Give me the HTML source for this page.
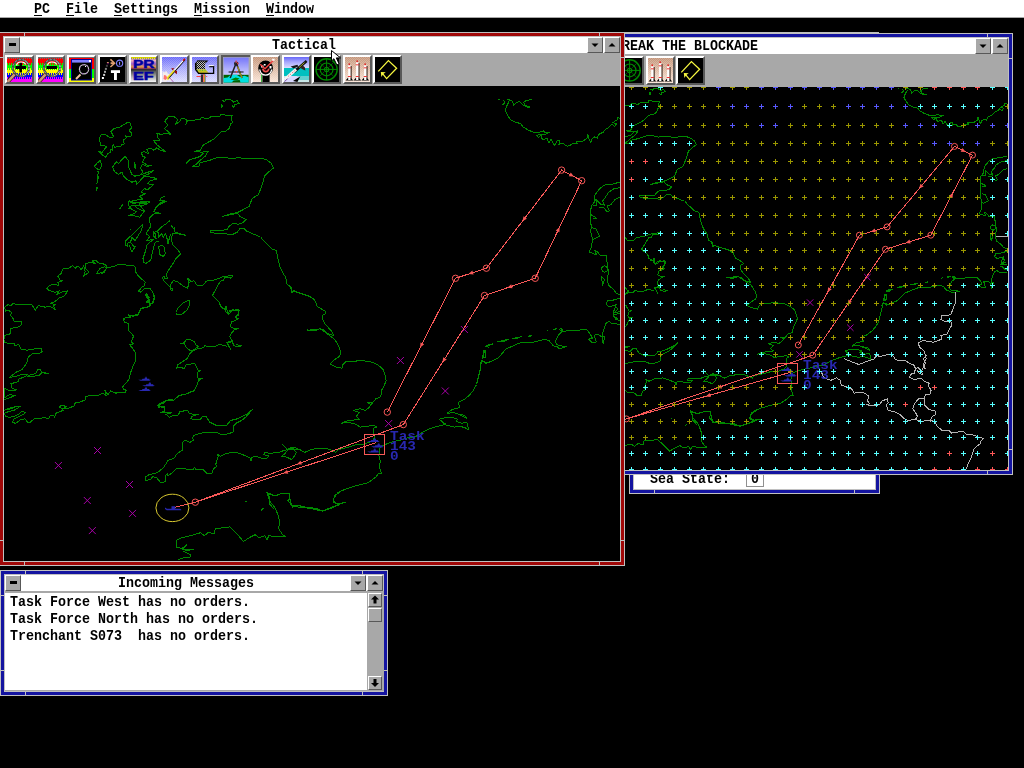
<!DOCTYPE html>
<html><head><meta charset="utf-8"><title>Tactical</title>
<style>
html,body{margin:0;padding:0;background:#000;}
body{width:1024px;height:768px;position:relative;overflow:hidden;font-family:"Liberation Mono",monospace;}
body>div,body>span,body>svg{position:absolute;display:block;}
.t{font:bold 13.333px/16px "Liberation Mono",monospace;white-space:pre;height:16px;transform-origin:0 12px;transform:scaleY(1.14);letter-spacing:0;will-change:transform;}
.btn{background:#a8a8a8;box-sizing:border-box;border-top:1px solid #fff;border-left:1px solid #fff;border-bottom:1px solid #585858;border-right:1px solid #585858;overflow:visible;}
.btn i{position:absolute;display:block;}
.btn svg{position:absolute;left:-1px;top:-1px;}
.ic{position:absolute;width:29px;height:29px;box-sizing:border-box;}
.icb{position:absolute;}
</style></head>
<body>
<svg width="0" height="0" style="position:absolute"><defs>
<pattern id="ckr" width="2" height="2" patternUnits="userSpaceOnUse"><rect width="1" height="1" fill="#f00"/><rect x="1" y="1" width="1" height="1" fill="#f00"/></pattern><pattern id="ckg" width="2" height="2" patternUnits="userSpaceOnUse"><rect width="1" height="1" fill="#0f0"/><rect x="1" y="1" width="1" height="1" fill="#0f0"/></pattern><pattern id="cky" width="2" height="2" patternUnits="userSpaceOnUse"><rect width="1" height="1" fill="#ff0"/><rect x="1" y="1" width="1" height="1" fill="#ff0"/></pattern><pattern id="ckb" width="2" height="2" patternUnits="userSpaceOnUse"><rect width="1" height="1" fill="#00f"/><rect x="1" y="1" width="1" height="1" fill="#00f"/></pattern><pattern id="ckm" width="2" height="2" patternUnits="userSpaceOnUse"><rect width="1" height="1" fill="#f0f"/><rect x="1" y="1" width="1" height="1" fill="#f0f"/></pattern><pattern id="ckw" width="2" height="2" patternUnits="userSpaceOnUse"><rect width="1" height="1" fill="#fff"/><rect x="1" y="1" width="1" height="1" fill="#fff"/></pattern><pattern id="ckk" width="2" height="2" patternUnits="userSpaceOnUse"><rect width="1" height="1" fill="#000"/><rect x="1" y="1" width="1" height="1" fill="#000"/></pattern>
<linearGradient id="sky" x1="0" y1="0" x2="0" y2="1"><stop offset="0" stop-color="#6868f8"/><stop offset="0.45" stop-color="#a8a8fc"/><stop offset="1" stop-color="#dcdcff"/></linearGradient>
<linearGradient id="tan" x1="0" y1="0" x2="0" y2="1"><stop offset="0" stop-color="#c49478"/><stop offset="1" stop-color="#fae4d6"/></linearGradient>
<linearGradient id="gry" x1="0" y1="0" x2="0" y2="1"><stop offset="0" stop-color="#505050"/><stop offset="0.5" stop-color="#a8a8a8"/><stop offset="1" stop-color="#f4f4f4"/></linearGradient>
<linearGradient id="sun" x1="0" y1="0" x2="0" y2="1"><stop offset="0" stop-color="#2020a0"/><stop offset="0.25" stop-color="#f8b8b8"/><stop offset="0.55" stop-color="#a060c8"/><stop offset="0.8" stop-color="#e0a040"/><stop offset="1" stop-color="#600060"/></linearGradient>
</defs></svg>
<div style="left:0px;top:0px;width:1024px;height:17px;background:#fff;"></div>
<div style="left:0px;top:17px;width:1024px;height:1px;background:#a8a8a8;"></div>
<span class="t" style="left:34px;top:2px;color:#000;">PC</span>
<div style="left:34px;top:15px;width:8px;height:1px;background:#000;"></div>
<span class="t" style="left:66px;top:2px;color:#000;">File</span>
<div style="left:66px;top:15px;width:8px;height:1px;background:#000;"></div>
<span class="t" style="left:114px;top:2px;color:#000;">Settings</span>
<div style="left:114px;top:15px;width:8px;height:1px;background:#000;"></div>
<span class="t" style="left:194px;top:2px;color:#000;">Mission</span>
<div style="left:194px;top:15px;width:8px;height:1px;background:#000;"></div>
<span class="t" style="left:266px;top:2px;color:#000;">Window</span>
<div style="left:266px;top:15px;width:8px;height:1px;background:#000;"></div>
<div style="left:629px;top:300px;width:251px;height:194px;background:#c0c0c0;"></div>
<div style="left:630px;top:301px;width:249px;height:192px;background:#1414a0;"></div>
<div style="left:633px;top:304px;width:243px;height:186px;background:#c0c0c0;"></div>
<div style="left:654px;top:301px;width:1px;height:3px;background:#c0c0c0;"></div>
<div style="left:654px;top:490px;width:1px;height:3px;background:#c0c0c0;"></div>
<div style="left:854px;top:301px;width:1px;height:3px;background:#c0c0c0;"></div>
<div style="left:854px;top:490px;width:1px;height:3px;background:#c0c0c0;"></div>
<div style="left:630px;top:325px;width:3px;height:1px;background:#c0c0c0;"></div>
<div style="left:876px;top:325px;width:3px;height:1px;background:#c0c0c0;"></div>
<div style="left:630px;top:468px;width:3px;height:1px;background:#c0c0c0;"></div>
<div style="left:876px;top:468px;width:3px;height:1px;background:#c0c0c0;"></div>
<div style="left:625px;top:32px;width:254px;height:1px;background:#c0c0c0;"></div>
<div style="left:634px;top:304px;width:241px;height:185px;background:#fff;"></div>
<span class="t" style="left:650px;top:472px;color:#000;">Sea&nbsp;State:</span>
<div style="left:746px;top:471px;width:18px;height:16px;background:#fff;border:1px solid #909090;box-sizing:border-box"></div>
<span class="t" style="left:751px;top:472px;color:#000;">0</span>
<div style="left:450px;top:33px;width:563px;height:442px;background:#c0c0c0;"></div>
<div style="left:451px;top:34px;width:561px;height:440px;background:#1414a0;"></div>
<div style="left:454px;top:37px;width:555px;height:434px;background:#c0c0c0;"></div>
<div style="left:475px;top:34px;width:1px;height:3px;background:#c0c0c0;"></div>
<div style="left:475px;top:471px;width:1px;height:3px;background:#c0c0c0;"></div>
<div style="left:987px;top:34px;width:1px;height:3px;background:#c0c0c0;"></div>
<div style="left:987px;top:471px;width:1px;height:3px;background:#c0c0c0;"></div>
<div style="left:451px;top:58px;width:3px;height:1px;background:#c0c0c0;"></div>
<div style="left:1009px;top:58px;width:3px;height:1px;background:#c0c0c0;"></div>
<div style="left:451px;top:449px;width:3px;height:1px;background:#c0c0c0;"></div>
<div style="left:1009px;top:449px;width:3px;height:1px;background:#c0c0c0;"></div>
<div style="left:455px;top:38px;width:553px;height:16px;background:#fff;"></div>
<div style="left:455px;top:54px;width:553px;height:33px;background:#a8a8a8;"></div>
<div style="left:455px;top:87px;width:553px;height:383px;background:#000;"></div>
<span class="t" style="left:614px;top:39px;color:#000;">BREAK&nbsp;THE&nbsp;BLOCKADE</span>
<div class="btn" style="left:975px;top:38px;width:16px;height:16px"><svg width="16" height="16"><path d="M4.5 6.5h7l-3.5 3.5z" fill="#000"/></svg></div>
<div class="btn" style="left:992px;top:38px;width:16px;height:16px"><svg width="16" height="16"><path d="M4.5 9.5h7l-3.5 -3.5z" fill="#000"/></svg></div>
<div style="left:0;top:0"><svg class="icb" style="left:615px;top:56px" width="29" height="29" viewBox="0 0 29 29"><rect x="2" y="2" width="25" height="25" fill="#000"/><g fill="none" stroke="#008800"><circle cx="14.6" cy="14.4" r="10.6" stroke-width="1.4"/><circle cx="14.6" cy="14.4" r="6.4" stroke-width="1.2"/><circle cx="14.6" cy="14.4" r="2.2" stroke-width="1.1"/><path d="M4 14.4h21.2M14.6 3.8v21.2" stroke-width="1"/><path d="M7.4 7.2l4.6 4.6M17.2 17l4.6 4.6M21.8 7.2l-4.6 4.6M12 17l-4.6 4.6" stroke-width="0.6"/></g><path d="M0 0h29l-2 2h-25v25l-2 2z" fill="#fff"/><path d="M29 0v29h-29l2-2h25v-25z" fill="#585858"/></svg><svg class="icb" style="left:646px;top:56px" width="29" height="29" viewBox="0 0 29 29"><rect x="2" y="2" width="25" height="25" fill="url(#tan)"/><rect x="2" y="2" width="25" height="25" fill="url(#ckw)" opacity="0.2"/><rect x="7.4" y="11" width="1.2" height="14" fill="#201008"/><path d="M2.6 25.4l2.6-2.8h2.3l2.8 2.8z" fill="#000"/><rect x="5.2" y="10" width="2.3" height="15" fill="#fff"/><rect x="5.5" y="8.4" width="1.5" height="1.8" fill="#e02020"/><rect x="4.9" y="12.4" width="3" height="0.9" fill="#f02020"/><rect x="4.9" y="21" width="3" height="0.9" fill="#f02020"/><rect x="15.3" y="8" width="1.2" height="17" fill="#201008"/><path d="M10.5 25.4l2.6-2.8h2.3l2.8 2.8z" fill="#000"/><rect x="13.1" y="7" width="2.3" height="18" fill="#fff"/><rect x="13.4" y="5.4" width="1.5" height="1.8" fill="#e02020"/><rect x="12.799999999999999" y="9.4" width="3" height="0.9" fill="#f02020"/><rect x="12.799999999999999" y="21" width="3" height="0.9" fill="#f02020"/><rect x="23.3" y="11" width="1.2" height="14" fill="#201008"/><path d="M18.5 25.4l2.6-2.8h2.3l2.8 2.8z" fill="#000"/><rect x="21.1" y="10" width="2.3" height="15" fill="#fff"/><rect x="21.400000000000002" y="8.4" width="1.5" height="1.8" fill="#e02020"/><rect x="20.8" y="12.4" width="3" height="0.9" fill="#f02020"/><rect x="20.8" y="21" width="3" height="0.9" fill="#f02020"/><path d="M0 0h29l-2 2h-25v25l-2 2z" fill="#fff"/><path d="M29 0v29h-29l2-2h25v-25z" fill="#585858"/></svg><svg class="icb" style="left:676px;top:56px" width="29" height="29" viewBox="0 0 29 29"><rect x="2" y="2" width="25" height="25" fill="#000"/><path d="M5.3 16.4L15.4 5.6l8.2 7.7-10 10.3-4.4-5.4" fill="none" stroke="#f8f840" stroke-width="1.3"/><path d="M7.8 17l5 0.3-2.6 1.6-1.8 3z" fill="#f8f840"/><path d="M0 0h29l-2 2h-25v25l-2 2z" fill="#fff"/><path d="M29 0v29h-29l2-2h25v-25z" fill="#585858"/></svg></div>
<svg style="left:625px;top:87px;will-change:transform" width="383" height="383" viewBox="625 87 383 383"><path d="M540.1 120.4L541.9 117.6L544.7 116.8L547.1 117.8L548.5 119.1L551.7 119.8L553.1 118.9L550.7 114.6L553.5 112.1L558.0 111.4L561.5 109.5L565.7 107.2L568.5 108.0L568.9 112.1L567.1 114.0L569.2 115.9L568.9 118.5L566.1 119.1L563.3 117.8L564.7 119.8L561.9 121.7L562.6 124.9L560.5 125.5L559.1 127.5L557.0 126.8L554.1 128.1L552.7 124.9L552.1 130.0L550.0 129.4L550.7 131.9L547.9 132.6L545.8 136.0L542.3 133.2L539.8 131.0L543.0 131.9L545.1 128.7L547.2 127.5L544.4 126.2L541.9 126.6L540.1 120.4M535.9 143.1L538.7 140.3L541.5 138.4L542.3 142.8L540.9 145.8L538.1 145.4L535.9 143.1M538.7 147.3L540.1 148.0L539.1 149.3M538.7 149.9L539.5 152.5L538.1 157.6L539.1 153.7L538.7 149.9M537.7 160.1L538.7 160.8L537.7 163.4L537.7 160.1M552.1 144.1L555.5 139.6L557.7 140.9L560.5 137.7L563.3 135.1L566.1 138.4L566.8 144.8L569.6 149.9L572.0 151.4L577.6 150.1L583.5 148.2L589.1 146.7L585.3 149.3L580.7 151.2L577.9 154.0L573.7 158.5L573.1 155.3L569.6 156.3L565.4 154.4L561.9 151.2L560.5 148.0L557.7 149.9L554.1 148.0L552.1 144.1M572.0 139.9L572.7 144.8L571.7 144.1L572.0 139.9M659.5 101.2L654.6 101.4L649.0 100.5L648.3 102.2L640.6 102.5L637.8 104.4L631.5 103.1L630.8 105.0L619.6 105.7L617.9 108.9L618.9 104.8L614.0 103.7L612.6 106.3L608.7 108.9L610.5 105.0L608.7 103.1L606.3 102.5L602.5 102.2L598.9 106.3L601.7 109.5L598.6 112.1L601.7 114.6L604.5 117.2L600.3 115.9L596.1 117.2L591.9 116.3L592.7 119.8L594.7 121.7L589.1 122.3L591.9 125.5L596.1 128.7L599.7 131.3L594.7 130.0L591.9 128.1L589.1 130.0L585.7 128.4L582.9 129.4L584.9 133.2L580.7 131.3L577.9 131.9L579.3 135.1L581.5 135.8L578.7 139.6L582.9 142.2L587.1 142.6L582.9 143.5L578.7 141.6L577.3 144.8L579.3 148.0L577.9 149.9L583.2 151.8L588.8 152.5L591.6 153.7L586.3 155.0L583.5 157.6L589.1 158.2L585.7 160.8L583.5 162.7L580.7 161.4L577.9 164.6L581.5 165.9L576.5 167.8L579.3 170.4L572.3 171.0L566.7 172.3L570.9 173.6L577.9 173.0L585.7 172.3L582.1 174.9L575.1 175.5L568.9 175.5L566.7 178.1M659.5 101.2L658.5 104.4L659.9 107.6L658.1 108.2L656.7 112.1L653.9 114.2L649.0 115.3L646.2 117.8L642.7 121.0L637.8 123.6L632.9 126.2L630.8 130.0L625.9 130.9L631.5 131.7L638.1 130.9L635.0 135.1L630.8 138.4L627.3 141.6L623.8 143.5L629.4 143.2L630.8 140.3L639.2 138.4L646.2 136.0L653.2 135.8L658.1 137.1L666.3 136.0M618.2 140.9L621.7 137.7L626.6 136.4L630.8 135.1L633.6 132.6M561.1 174.6L558.7 178.7M599.3 167.8L595.8 169.1L594.4 171.7L600.7 171.9L595.8 173.0L592.3 176.2L590.2 178.7M649.7 88.6L652.5 90.3L653.9 88.1L658.1 88.6L660.9 90.7L663.7 89.4L665.8 91.6L661.6 92.8L660.9 94.8L659.5 93.5M649.7 92.2L651.1 94.1L649.7 94.8L649.7 92.2M566.8 171.6L573.1 173.2L580.1 171.9L585.7 172.8L581.5 174.1L575.9 173.7L578.0 176.7L580.8 179.9L578.0 183.1L576.6 185.0L571.0 183.7L566.8 183.7L571.0 182.2L573.8 180.5L569.6 178.6L566.8 176.0L566.8 171.6M571.0 174.8L574.5 178.0L580.1 179.9M561.2 174.1L558.4 178.6M594.8 170.9L600.4 171.9L595.5 174.1L591.3 176.7L589.2 180.5L594.8 181.8L588.5 182.5L585.4 185.7L585.7 190.2L586.4 192.7L584.3 195.3L582.2 198.5L585.4 201.1L582.9 204.3L587.1 203.6L589.2 203.0M589.2 203.0L585.7 205.5L582.9 208.1L581.5 213.2L579.4 219.0L580.1 222.2L582.2 222.8L586.4 220.3L587.8 214.5L589.2 208.7L590.6 205.5L593.4 204.9M563.3 204.9L566.8 201.7L571.0 198.5L575.2 194.6L579.4 190.8L578.0 195.9L574.5 201.1L572.4 204.3L569.6 201.7L568.2 205.5L566.1 205.5L565.4 208.7L563.3 208.1L563.3 204.9M568.2 205.5L571.0 208.7L572.4 209.4L569.6 213.2L568.2 211.3L567.5 208.1M568.2 195.3L568.9 194.6M593.4 209.4L596.2 208.1L598.3 209.4L599.4 215.2L597.6 217.1L594.8 216.4L593.4 209.4M589.2 196.6L588.5 199.8L591.3 203.0L589.9 197.2L592.7 195.9L593.4 201.7L594.8 199.8L596.2 198.5L597.6 201.7L599.7 198.5L601.1 203.0L601.8 206.8L603.2 201.7L604.6 198.5M603.9 187.6L599.7 190.8L596.2 192.7L593.4 195.3L592.0 197.8M604.6 191.4L606.7 194.6L608.1 193.4L607.8 197.2L617.2 199.8L610.2 198.5L606.0 198.5L604.6 203.0L606.0 207.5L609.5 210.7L610.9 212.0L613.0 215.2L608.8 219.0L606.0 223.5L603.2 227.3L601.1 229.9L600.4 233.1L601.8 235.0L599.0 235.7L598.3 233.1L596.9 234.4L597.6 237.0L601.1 240.2L603.2 242.1L606.0 244.0L605.3 245.3L603.9 244.6L603.9 240.8L606.7 237.0L610.9 238.2L615.1 241.4L619.3 243.4L620.7 238.9L619.3 235.0L622.8 238.2L624.9 237.0L627.7 240.8L633.3 240.8L636.1 237.6L644.5 236.3L651.5 233.7L659.9 232.7L658.5 235.0L652.9 234.4L651.5 237.0L648.7 237.6L644.5 244.6L641.7 249.1L647.3 254.3L648.7 258.1L652.9 260.7L654.3 258.1L655.0 263.2L657.1 263.9L659.9 260.7L662.7 262.0L665.5 261.3L664.8 265.8L662.7 266.4L664.1 269.0M676.7 170.9L674.6 176.0L668.3 179.3L664.1 181.2L657.1 182.5L650.8 184.4L657.1 183.1L664.1 181.8L666.2 184.4L671.8 186.9L669.0 189.5L664.8 190.8L659.9 190.2L656.4 192.7L655.0 195.3L647.3 195.9L639.6 195.9L640.3 197.8L650.1 198.5L659.9 199.1L664.1 197.2L666.2 194.6L670.4 194.6L672.5 196.6L677.4 198.5L684.3 201.1M540.9 222.8L545.1 223.5L547.2 226.1L545.1 229.9L542.3 231.2L540.9 230.5M547.2 226.7L553.5 225.4L558.4 223.5L561.9 223.5L565.4 224.8L570.3 224.5L572.4 226.1L572.8 229.9L574.5 232.5L578.0 235.7L581.5 238.2L580.8 241.4L578.0 242.7L575.9 245.3L578.0 245.9L580.8 243.4L585.7 243.4L588.5 247.2L589.6 251.7L588.5 255.5L585.0 255.5L582.9 254.9L585.0 251.1L582.9 247.9L582.2 249.8L584.3 253.0L585.7 256.8L584.3 258.7L578.7 259.4L576.6 262.0L575.2 265.2L570.3 266.4L566.8 265.2L568.2 267.1L563.3 267.7L562.6 269.0M608.8 263.2L610.9 259.4L615.1 255.5L620.7 253.0L621.4 256.8L618.6 261.3L613.7 265.2L609.5 265.2L608.8 263.2M494.7 244.8L500.3 246.7L504.5 245.4L501.7 248.6L507.3 246.1L512.2 245.4L508.7 249.9L504.5 251.2L500.3 254.4L496.8 255.7L501.0 257.0L498.9 257.6L501.0 260.8L496.1 258.2L491.9 258.9L485.6 257.6L482.8 261.4L480.0 257.0L465.3 256.3L463.2 255.7L461.1 257.6L458.3 257.0L455.5 258.9L456.2 262.1L459.0 261.4L461.8 263.4L460.4 265.3L462.5 267.2L463.9 270.4L470.2 270.4L470.2 273.6L466.7 275.5L461.1 276.2L460.4 280.7L455.5 282.0L454.8 285.8L455.5 287.7L459.7 289.0L463.9 288.4L464.6 290.3L468.1 289.7L470.2 293.5L475.8 294.1L484.2 292.9L488.4 292.9L489.1 295.4L486.3 296.7L480.7 296.7L476.5 299.9L475.8 303.8L473.0 307.6L470.9 310.2L466.0 312.1L459.7 316.6L466.7 315.3L470.9 314.0L477.9 314.7L483.5 313.4L484.9 310.2L487.7 310.2L488.4 312.1L494.7 313.4L489.1 312.7L486.3 314.7L480.0 315.9L475.1 315.3L468.1 317.9L468.1 319.8L461.1 321.7L461.8 324.9L466.0 326.8L459.7 327.5L455.5 325.6L455.2 333.2L459.7 330.7L465.3 331.3L459.7 333.2L455.2 334.5M456.9 342.9L462.5 340.9L469.5 340.3M503.8 340.3L507.3 339.7L510.8 340.3L507.3 342.2L503.8 340.3M515.0 340.9L518.5 339.7L517.8 337.7L524.1 336.5L528.3 334.5L527.6 332.6L531.1 331.3L540.2 330.9L543.7 329.4L546.5 331.3L545.1 326.8L547.9 330.7L550.7 327.5L554.9 329.4L561.9 328.8L563.3 329.4L564.4 326.8L561.9 326.2L561.2 324.3L563.3 321.7L566.8 318.5L568.2 312.7L570.3 307.6L573.1 302.5L572.4 296.1L570.3 292.9L567.5 289.7L571.0 289.0L568.9 287.1L571.0 282.6L566.8 278.1L566.1 272.3L562.6 271.1L561.9 268.5L564.0 267.2L568.9 267.9L566.1 265.3L570.3 265.9L575.2 264.6L577.3 260.2L585.0 258.2L587.8 255.0L589.9 250.5L587.8 246.1L587.1 244.8M581.5 248.6L584.3 251.2L585.7 254.4L582.2 255.0L584.3 252.5L582.2 249.9M575.2 245.4L577.3 246.7L579.4 244.8M594.7 339.0L592.7 339.7L593.4 340.9M515.0 340.9L511.5 342.2L507.3 342.0L508.0 343.5L504.5 344.8L501.0 346.1L500.3 349.3L498.9 347.3L496.1 348.0L494.7 350.6L490.5 349.3L487.0 350.6L482.8 349.9L478.6 353.1L475.8 353.1L473.7 350.6L469.5 351.2L465.3 354.4L462.5 353.1L463.9 350.6L468.1 348.6L472.3 346.7L474.4 345.4L470.9 344.1L468.1 346.7L463.9 348.6L459.7 349.3L456.2 348.6L455.2 346.1L458.3 344.8L463.9 343.5L469.5 340.3L465.3 340.7L461.1 342.2L456.9 342.9L455.2 343.5M644.6 244.8L641.4 249.3L644.6 251.8L648.1 255.0L648.8 257.6L650.9 260.2L653.0 260.2L653.7 258.2L653.5 262.7L655.8 264.6L657.2 261.4L660.7 261.4L664.9 260.8L664.7 264.6L662.1 267.2L664.9 268.5L662.1 269.8L658.6 271.1L657.9 274.9L660.7 276.2L664.9 276.2L661.4 277.5L658.6 280.0L657.2 283.2L659.3 286.4L654.4 287.7L657.9 293.5L655.1 288.4L659.3 287.1L660.7 290.3L664.9 291.6L667.7 290.3L662.8 289.7M654.4 290.9L648.1 289.4L642.5 291.6L636.2 290.9L634.8 290.3L633.4 292.2L628.5 292.9L624.3 294.8L621.5 296.7L618.7 301.2L614.5 303.8L610.3 306.3L609.6 308.9L613.8 308.2L615.9 309.5L618.0 306.3L625.7 305.0L627.1 307.6L629.2 311.4L631.3 310.8L628.5 312.1L627.8 315.9L629.2 317.9L632.7 317.2L629.2 319.1L627.8 323.0L625.7 326.8L621.5 328.8L616.6 330.7L611.0 331.3L606.8 335.2L604.0 334.5L599.1 335.8L597.7 337.7L593.5 339.0L593.5 340.9L598.4 340.3L599.1 342.9M612.4 288.4L615.2 289.0L618.0 285.8L621.5 285.5L625.0 286.8L627.1 290.3L629.2 290.9L624.3 294.1L621.5 294.5L618.0 291.6L615.9 288.4M625.0 327.5L618.7 330.0L611.7 331.3L606.8 335.2L599.8 335.8L593.5 338.4L593.5 340.7L598.4 340.9L599.1 344.1L594.9 345.4L605.4 345.4L599.8 346.7L603.3 349.3L606.8 347.3L611.0 347.3L612.4 344.8L619.4 343.2L620.8 346.1L624.3 346.7L629.2 346.7L622.9 348.6L622.2 350.6L630.6 351.2L632.7 348.6L636.2 348.6L639.0 353.1L644.6 355.7L654.4 355.7L657.9 351.8L663.5 350.6L668.4 348.6L673.3 346.1L677.5 342.9L671.9 348.6L667.7 351.8L663.5 353.8L660.7 356.3L660.0 361.5L653.7 363.4L649.5 363.4L644.6 361.5L635.5 361.5L629.2 362.7L625.0 364.0L623.6 366.6L625.0 367.9L621.5 369.8L617.3 368.1L615.2 369.1L614.5 376.2L609.6 379.4L607.5 382.6L601.9 384.5L598.4 389.7L594.2 393.5L590.0 395.4L585.1 396.1L581.6 398.0L582.1 400.9L585.8 400.6L587.9 398.0L591.4 398.6L595.6 403.1L599.8 401.8L599.1 398.0L601.2 395.4L601.9 397.4L605.4 394.8L609.6 390.9L616.6 391.6L624.3 392.2L625.7 390.3L627.1 392.2L633.4 392.2L636.9 395.4L641.1 395.4L642.5 391.6L645.3 389.7L644.6 387.7L646.7 381.3L646.0 379.4L648.8 381.3L654.4 378.8L662.8 377.9L669.1 380.0L675.4 382.6L676.1 385.2L676.8 382.0L681.0 381.3L685.2 382.6L690.8 382.6L692.2 380.7L687.3 380.0L688.7 378.1L692.9 378.8L701.3 378.1L706.2 376.2L711.1 375.6L720.1 375.3M704.1 371.5L709.0 375.6L713.2 373.6L716.7 378.1L715.3 380.7L712.5 383.9L708.3 382.0L703.4 381.3L706.2 379.4L709.0 376.2M690.1 410.8L692.2 412.7L699.2 413.4L704.1 411.5L710.4 411.5L711.1 415.3L709.0 417.2L713.2 422.4L720.1 421.7M690.1 410.8L692.9 415.3L692.9 420.4L697.1 424.9M671.4 418.1L672.5 418.4M685.9 424.9L687.3 424.0M690.5 411.1L697.5 413.5L704.5 411.6L710.6 411.6L711.1 416.7L713.2 423.1L716.7 421.2L725.5 423.1L734.2 423.9L740.4 426.3L750.0 423.1L755.9 420.7M690.5 411.1L693.1 418.3L697.5 423.1L700.1 428.7L701.9 434.3L701.0 440.8L704.5 445.6L707.1 447.2L699.2 447.5L692.2 446.4L690.5 449.6L688.7 446.4L683.5 448.0L680.0 445.6L674.7 448.0L669.5 451.2L664.2 445.6L660.7 442.4L657.2 439.2L653.7 440.0L650.2 440.0L644.1 440.8L643.2 444.8L638.0 443.6L634.5 446.4L631.0 444.0L622.2 446.4L614.4 448.0L609.1 450.4L609.1 456.0L614.4 456.8L618.7 453.6L614.4 457.6L624.9 457.6L616.1 459.2L622.2 462.4L621.4 464.0L614.4 464.8L610.9 466.4M755.9 411.1L751.7 412.7L750.0 416.7L751.7 419.9L755.9 420.7M671.2 418.0L672.3 418.2M685.2 425.5L687.3 423.9M793.4 326.8L792.5 332.4L788.1 334.0L783.8 338.9L780.3 337.3L784.6 337.3L782.0 341.3L778.5 343.7L774.1 342.1L768.0 343.7L773.3 345.3L770.6 348.5L773.3 350.9L767.1 351.7L761.0 352.5L757.5 354.1L763.6 353.3L769.8 354.9L774.1 357.3L781.1 356.5L786.4 355.7L789.0 357.3L786.4 358.1L786.0 362.9L786.7 366.1L784.6 368.8L781.1 370.1L776.8 371.7L770.6 371.7L761.9 374.1L754.0 375.7L752.3 378.1L748.8 376.5L744.4 374.9L737.4 374.6L729.5 375.7L724.3 378.1L719.9 375.7L715.5 374.1L711.1 374.9M851.1 354.4L847.6 355.7L840.6 357.3L833.6 359.7L827.5 362.9L823.1 365.3L816.1 366.1L809.1 368.2L803.0 369.3L796.0 371.7L792.0 373.6L790.8 380.5L792.0 385.3L791.3 390.1L793.4 395.8L790.8 395.0L788.1 398.2L781.1 403.0L770.6 405.4L761.9 407.8L754.0 411.0L750.5 415.8L749.6 419.0L754.9 420.1L761.0 419.0L754.9 420.6L748.8 423.0L740.0 426.2L728.6 423.8L719.0 423.0L714.6 422.2L711.1 419.8M845.0 350.9L851.1 349.3L856.4 349.3L861.6 350.9L859.9 352.5L865.1 354.1L869.5 353.3L870.4 356.5L871.3 359.7L868.6 358.1L863.4 356.5L858.1 357.3L851.1 355.7L845.0 350.9M852.0 346.1L858.1 345.3L864.3 347.7L869.5 350.1L867.8 347.7L863.4 346.9M852.0 346.1L856.4 342.9L863.4 341.3L861.6 337.3L866.9 334.8L872.1 330.8L875.6 326.8M711.1 241.4L712.9 247.0L714.6 245.4L721.6 247.8L728.6 250.2L733.0 252.6L735.6 258.2L742.6 262.2L743.5 263.8L740.5 265.4L740.0 267.9L742.6 272.7L748.8 279.1L750.5 282.3L745.3 280.7L740.9 277.5L737.4 276.7L733.0 278.3L726.0 277.5M726.0 278.0L732.1 277.1L738.3 276.7L743.5 279.9L751.4 285.5L754.9 291.1L756.6 295.9L755.8 299.1L750.5 302.3L747.0 305.5L752.3 307.9L756.6 308.7L757.5 309.5L758.4 306.3L761.9 303.1L768.9 303.1L776.8 302.8L784.6 303.9L789.9 306.3L794.3 309.5L796.9 315.9L797.2 319.1L795.1 323.9L793.4 326.8M890.3 290.3L886.1 291.1L889.6 291.9M886.1 294.3L884.4 296.7L883.5 300.7L886.1 299.9L886.1 295.1M890.3 304.7L886.1 303.9L882.6 303.1L881.8 309.5L880.0 315.9L878.3 322.3L875.6 326.8M666.3 136.4L671.1 137.0L678.1 137.0L686.5 136.6L690.7 138.3L694.2 140.8L696.3 144.7L692.1 147.9L688.6 151.1L687.2 154.3M687.6 154.5L685.5 160.3L682.7 166.7L677.8 169.3L676.4 170.5M684.8 200.9L686.9 203.9L691.1 207.7L694.6 210.9L698.8 212.2L700.2 218.6L702.3 226.3L705.1 231.4L707.2 234.0L708.6 240.4L712.1 242.3L712.5 246.2L714.2 245.5L719.8 247.5L725.4 248.7L730.3 250.7L732.4 253.0M897.9 88.3L898.9 88.7M902.4 88.9L903.8 90.8L901.7 92.8L902.4 91.5M905.9 88.7L908.7 88.9L910.8 90.2L911.5 93.4L914.3 90.8L917.1 90.2L919.9 92.8L923.4 94.7L926.2 94.7L922.0 93.4L920.6 90.8L923.4 88.9L928.3 88.7M907.3 90.2L905.2 94.0L903.8 97.2L905.9 101.1L908.7 104.9L912.9 107.1L917.8 108.1L919.9 111.0L924.1 113.3L929.0 115.2L933.2 115.8L937.4 114.6L938.1 113.9L939.5 115.8L943.7 115.2L940.2 117.1L931.8 117.8L933.9 119.7L936.0 117.8L937.4 121.6L941.6 120.3L943.0 124.2L945.1 121.0L947.2 124.8L948.6 126.1L950.7 122.2L952.8 122.2L952.1 125.5L955.6 124.2L957.7 126.1L959.8 126.7L963.3 125.5L965.4 124.2L968.9 124.8L967.5 122.9L973.8 122.5L977.3 120.3L978.0 117.1L979.4 121.6L980.8 123.5L981.5 121.0L984.3 119.0L986.4 120.3L987.8 117.1L992.0 115.2L994.1 112.6L996.9 111.3L999.7 108.8L1001.8 110.7L1003.9 108.1L1000.4 107.5L1004.6 104.9L1004.6 103.0L1007.4 104.3L1011.6 101.7M1006.9 156.2L999.9 157.8L993.8 158.3L988.5 161.5L984.1 167.1L983.8 172.7L981.0 176.0L980.3 184.8L981.0 192.8L980.6 197.6L982.0 202.4L981.5 208.8L979.2 213.6L985.9 216.0L984.1 212.0L986.8 213.6L989.4 216.8L994.6 216.8L995.5 224.8L996.4 229.6L995.5 236.1L996.4 240.9L1000.8 244.1L1003.4 247.3L1006.9 248.9M1006.9 160.7L1001.6 161.5L996.4 164.7L993.8 168.7L991.1 171.9L992.9 175.2L989.4 174.3L985.0 170.3L985.9 175.2L982.4 176.0M1006.9 168.7L1002.5 170.3L999.0 174.3L995.5 176.0L997.3 180.0L994.6 180.0L992.0 176.8L987.6 176.8M981.0 183.2L984.1 184.8L985.9 186.4L982.4 186.0M981.5 193.6L985.0 194.4L988.5 200.8L983.3 203.2L981.5 202.4M990.3 226.4L992.9 224.8L995.5 226.4L995.5 228.8L992.9 230.4L990.8 228.8L990.3 226.4M990.3 233.7L992.9 236.1L991.1 240.9L990.3 233.7M1006.9 251.3L1001.6 252.9L995.5 253.7L994.6 256.9L997.3 258.5L1003.4 256.9L1001.6 260.9L1000.8 264.9L1006.9 264.1M1000.8 265.7L1004.3 268.1L1002.5 269.4M881.4 305.9L883.2 302.7L886.7 305.1L891.0 303.5L898.0 300.3L902.4 295.5L905.0 293.0L912.9 289.8L919.0 287.4L929.5 287.4L940.0 285.0L943.5 286.6L947.0 290.6L950.5 291.4L952.3 293.0L954.9 292.2L959.3 291.1L954.0 290.6L950.5 289.8L948.8 287.4L951.4 281.8L954.9 278.6L961.0 278.3L968.0 277.8L976.8 277.0L980.3 281.0L982.0 284.2L978.5 285.0L981.2 287.4L985.5 287.4L983.8 281.8L987.3 281.0L990.8 283.4L993.4 282.6L991.7 289.0L990.8 284.2L991.7 278.6L994.3 272.2L996.9 270.6L999.5 272.2L1006.5 273.0M885.8 291.1L889.3 289.5L892.8 289.0L889.3 290.5L885.8 291.1M897.2 287.4L901.5 286.2L906.8 285.5L902.4 287.0L897.2 287.4M910.3 284.7L918.2 283.1L913.8 284.6L910.3 284.7M924.6 282.6L927.8 281.8L926.0 283.0L924.6 282.6M940.9 278.6L942.7 277.8M947.0 277.0L950.2 276.4L948.8 277.3L947.0 277.0M952.6 277.0L954.0 276.2L955.4 277.8L953.7 278.3L952.6 277.0M884.0 294.7L886.1 294.3L886.1 299.5L884.0 300.7L884.0 294.7M1000.4 265.8L1003.9 269.0L1006.5 269.8M1001.3 257.0L1004.8 260.2L1002.2 263.4L1006.5 262.6M547.2 226.7L546.5 224.4L543.0 223.1L539.5 222.5L537.4 220.5L533.9 220.5L536.7 223.1L532.5 222.2L528.3 223.1L528.0 227.0L531.1 230.2L526.2 233.4L527.6 229.5L526.2 225.0L524.1 228.2L521.3 225.0L518.5 227.0L516.4 224.8L512.9 227.0L508.0 227.0L505.9 231.4L503.1 233.4L505.2 236.6L507.3 237.2L503.1 238.5L503.8 241.1L499.6 239.8L496.1 241.1L493.0 243.2L494.7 244.8M538.1 230.8L540.9 227.0L545.1 225.7L547.2 226.7L543.7 230.2L538.1 231.4L538.1 230.8" fill="none" stroke="#008800" stroke-width="1" stroke-linejoin="round" shape-rendering="crispEdges"/><path d="M820.8 370.6L823.7 377.4L830.6 380.4L836.4 377.8L840.3 380.4L841.3 385.2L847.2 387.2L852.0 389.2L854.0 393.1L860.8 392.1L864.7 393.1L868.6 396.0L867.7 400.9L869.6 403.8L866.7 404.8L874.5 405.8L879.4 404.8L882.3 400.9L887.2 398.9L888.2 402.8L886.2 405.2L888.2 410.6L894.0 411.6L899.9 414.5L903.8 418.5L907.7 420.4L915.5 419.4L921.4 421.4L929.2 420.4L935.0 421.4L937.0 426.3L941.9 430.2L948.7 430.2L951.6 433.1L957.5 432.1L963.4 431.1L966.3 434.1L974.1 435.1L978.0 437.0L983.9 438.4L980.9 440.9L980.0 443.8L974.1 448.7L971.2 457.5L968.2 463.4L966.3 469.2M924.3 397.9L918.4 398.9L914.5 403.8L912.6 408.7L915.5 412.6L917.5 416.5L915.5 419.4M924.3 397.9L924.3 404.8L929.2 409.7L935.0 410.6L936.0 414.5L932.1 416.5L930.2 421.4M924.3 397.9L925.3 395.0L930.2 394.0L931.1 390.1L928.2 386.2L929.2 383.3L924.3 381.3L921.4 378.4L913.6 379.4L909.7 377.4L910.6 374.5L914.5 372.6L915.5 368.6L918.4 367.7L921.4 371.6L922.4 374.5L918.4 372.6L917.5 370.0M921.4 371.6L924.3 365.7L925.3 362.8L923.3 358.9L926.3 356.0L925.3 354.0M955.6 292.4L955.6 302.1L952.6 309.9L950.7 314.8L941.9 315.8L940.9 319.7L945.8 321.7L950.7 320.7L951.6 325.6L948.7 330.4L946.8 334.4L940.9 335.3L941.9 339.2L933.1 342.2L926.3 341.2L923.3 340.2L918.4 343.1L919.4 347.0L924.3 351.0L926.3 358.8L923.3 364.6L925.3 366.6M844.2 358.8L849.1 360.7L858.9 364.6L865.7 361.7L874.5 358.8L876.5 353.9L879.4 356.8L886.2 354.9L892.1 354.5L895.0 358.8L897.9 360.7L905.8 360.7L909.7 363.6L913.6 364.6L915.5 368.5L914.5 374.0M924.3 364.2L922.9 366.2L925.3 368.1L923.7 369.5M996.0 237.0L1001.0 236.5L1008.0 237.0" fill="none" stroke="#b4b4b4" stroke-width="1" stroke-linejoin="round" shape-rendering="crispEdges"/><path d="M535.5 373.3l6.4 6.4M541.9 373.3l-6.4 6.4M500.4 385.6l6.4 6.4M506.8 385.6l-6.4 6.4M564.1 401.2l6.4 6.4M570.5 401.2l-6.4 6.4M526.3 414.3l6.4 6.4M532.7 414.3l-6.4 6.4M566.8 424.9l6.4 6.4M573.2 424.9l-6.4 6.4M530.8 439.0l6.4 6.4M537.2 439.0l-6.4 6.4M796.3 351.2l6.4 6.4M802.7 351.2l-6.4 6.4M847.1 324.5l6.4 6.4M853.5 324.5l-6.4 6.4M806.9 299.4l6.4 6.4M813.3 299.4l-6.4 6.4M864.2 274.0l6.4 6.4M870.6 274.0l-6.4 6.4" stroke="#a800a8" stroke-width="1" fill="none"/><g shape-rendering="crispEdges"><path d="M626.3 418.9L812.7 355.2L885.4 249.3L930.8 235.2L972.5 155.1L954.5 146.4L887.1 226.9L859.4 235.2L798.3 345.0" fill="none" stroke="#f85858" stroke-width="1"/><path d="M606.3 423.4L626.3 418.9L790.2 372.4" fill="none" stroke="#f85858" stroke-width="1"/></g><circle cx="626.3" cy="418.9" r="3.0" fill="none" stroke="#f85858" stroke-width="1"/><circle cx="812.7" cy="355.2" r="3.0" fill="none" stroke="#f85858" stroke-width="1"/><circle cx="885.4" cy="249.3" r="3.0" fill="none" stroke="#f85858" stroke-width="1"/><circle cx="930.8" cy="235.2" r="3.0" fill="none" stroke="#f85858" stroke-width="1"/><circle cx="972.5" cy="155.1" r="3.0" fill="none" stroke="#f85858" stroke-width="1"/><circle cx="954.5" cy="146.4" r="3.0" fill="none" stroke="#f85858" stroke-width="1"/><circle cx="887.1" cy="226.9" r="3.0" fill="none" stroke="#f85858" stroke-width="1"/><circle cx="859.4" cy="235.2" r="3.0" fill="none" stroke="#f85858" stroke-width="1"/><circle cx="798.3" cy="345.0" r="3.0" fill="none" stroke="#f85858" stroke-width="1"/><path d="M965.8 151.9L960.7 151.7L962.5 148.0zM952.9 192.8L952.6 197.9L948.9 196.0zM919.1 188.6L920.5 183.7L923.7 186.4zM870.8 231.8L874.7 228.4L875.9 232.4zM905.6 243.0L909.5 239.6L910.7 243.6zM827.6 292.3L828.1 287.2L831.7 289.3zM847.6 304.4L848.5 299.4L851.9 301.7zM717.0 387.9L720.8 384.4L722.1 388.4z" fill="#f85858"/><path d="M705.7 396.4L709.7 393.1L710.8 397.1z" fill="#f85858"/><rect x="777.5" y="363.5" width="20" height="20" fill="none" stroke="#f85858" stroke-width="1" shape-rendering="crispEdges"/><path d="M780.1 370.0h12.6l-1.4 1.1h-8.8zM783.7 370.0l0.6-1h6.8v1zM786.5 369.0v-1h2.4v1zM787.3 368.0v-1h1v1zM784.1 375.3h12.6l-1.4 1.1h-8.8zM787.7 375.3l0.6-1h6.8v1zM790.5 374.3v-1h2.4v1zM791.3 373.3v-1h1v1zM780.1 380.5h12.6l-1.4 1.1h-8.8zM783.7 380.5l0.6-1h6.8v1zM786.5 379.5v-1h2.4v1zM787.3 378.5v-1h1v1z" fill="#2828b0"/><text transform="translate(803,368.8) scale(1,0.9)" font-family="Liberation Mono" font-weight="bold" font-size="14.4" fill="#2828b0">Task</text><text transform="translate(803,378.9) scale(1,0.9)" font-family="Liberation Mono" font-weight="bold" font-size="14.4" fill="#2828b0">143</text><text transform="translate(803,389.0) scale(1,0.9)" font-family="Liberation Mono" font-weight="bold" font-size="14.4" fill="#2828b0">0</text><g shape-rendering="crispEdges" fill="none" stroke-width="1"><path d="M629 87.5h5M631.5 85v5M643 87.5h5M645.5 85v5M672 87.5h5M674.5 85v5M687 87.5h5M689.5 85v5M701 87.5h5M703.5 85v5M730 87.5h5M732.5 85v5M744 87.5h5M746.5 85v5M903 87.5h5M905.5 85v5M918 87.5h5M920.5 85v5M658 106.5h5M660.5 104v5M672 106.5h5M674.5 104v5M687 106.5h5M689.5 104v5M701 106.5h5M703.5 104v5M716 106.5h5M718.5 104v5M802 106.5h5M804.5 104v5M817 106.5h5M819.5 104v5M831 106.5h5M833.5 104v5M1005 106.5h5M1007.5 104v5M643 125.5h5M645.5 123v5M658 125.5h5M660.5 123v5M672 125.5h5M674.5 123v5M687 125.5h5M689.5 123v5M701 125.5h5M703.5 123v5M716 125.5h5M718.5 123v5M744 125.5h5M746.5 123v5M788 125.5h5M790.5 123v5M802 125.5h5M804.5 123v5M817 125.5h5M819.5 123v5M831 125.5h5M833.5 123v5M846 125.5h5M848.5 123v5M860 125.5h5M862.5 123v5M874 125.5h5M876.5 123v5M889 125.5h5M891.5 123v5M961 125.5h5M963.5 123v5M701 143.5h5M703.5 141v5M716 143.5h5M718.5 141v5M730 143.5h5M732.5 141v5M744 143.5h5M746.5 141v5M759 143.5h5M761.5 141v5M773 143.5h5M775.5 141v5M788 143.5h5M790.5 141v5M802 143.5h5M804.5 141v5M817 143.5h5M819.5 141v5M831 143.5h5M833.5 141v5M846 143.5h5M848.5 141v5M860 143.5h5M862.5 141v5M874 143.5h5M876.5 141v5M889 143.5h5M891.5 141v5M903 143.5h5M905.5 141v5M918 143.5h5M920.5 141v5M990 143.5h5M992.5 141v5M1005 143.5h5M1007.5 141v5M687 161.5h5M689.5 159v5M701 161.5h5M703.5 159v5M716 161.5h5M718.5 159v5M730 161.5h5M732.5 159v5M744 161.5h5M746.5 159v5M759 161.5h5M761.5 159v5M773 161.5h5M775.5 159v5M788 161.5h5M790.5 159v5M802 161.5h5M804.5 159v5M817 161.5h5M819.5 159v5M831 161.5h5M833.5 159v5M846 161.5h5M848.5 159v5M860 161.5h5M862.5 159v5M874 161.5h5M876.5 159v5M889 161.5h5M891.5 159v5M903 161.5h5M905.5 159v5M918 161.5h5M920.5 159v5M932 161.5h5M934.5 159v5M947 161.5h5M949.5 159v5M961 161.5h5M963.5 159v5M975 161.5h5M977.5 159v5M672 179.5h5M674.5 177v5M687 179.5h5M689.5 177v5M701 179.5h5M703.5 177v5M716 179.5h5M718.5 177v5M730 179.5h5M732.5 177v5M744 179.5h5M746.5 177v5M759 179.5h5M761.5 177v5M773 179.5h5M775.5 177v5M788 179.5h5M790.5 177v5M802 179.5h5M804.5 177v5M817 179.5h5M819.5 177v5M831 179.5h5M833.5 177v5M846 179.5h5M848.5 177v5M860 179.5h5M862.5 177v5M874 179.5h5M876.5 177v5M889 179.5h5M891.5 177v5M903 179.5h5M905.5 177v5M918 179.5h5M920.5 177v5M932 179.5h5M934.5 177v5M947 179.5h5M949.5 177v5M961 179.5h5M963.5 177v5M975 179.5h5M977.5 177v5M643 197.5h5M645.5 195v5M658 197.5h5M660.5 195v5M672 197.5h5M674.5 195v5M687 197.5h5M689.5 195v5M701 197.5h5M703.5 195v5M716 197.5h5M718.5 195v5M730 197.5h5M732.5 195v5M744 197.5h5M746.5 195v5M759 197.5h5M761.5 195v5M773 197.5h5M775.5 195v5M788 197.5h5M790.5 195v5M802 197.5h5M804.5 195v5M817 197.5h5M819.5 195v5M831 197.5h5M833.5 195v5M846 197.5h5M848.5 195v5M860 197.5h5M862.5 195v5M874 197.5h5M876.5 195v5M889 197.5h5M891.5 195v5M903 197.5h5M905.5 195v5M918 197.5h5M920.5 195v5M932 197.5h5M934.5 195v5M947 197.5h5M949.5 195v5M961 197.5h5M963.5 195v5M975 197.5h5M977.5 195v5M701 215.5h5M703.5 213v5M716 215.5h5M718.5 213v5M730 215.5h5M732.5 213v5M744 215.5h5M746.5 213v5M759 215.5h5M761.5 213v5M773 215.5h5M775.5 213v5M788 215.5h5M790.5 213v5M802 215.5h5M804.5 213v5M817 215.5h5M819.5 213v5M831 215.5h5M833.5 213v5M846 215.5h5M848.5 213v5M860 215.5h5M862.5 213v5M874 215.5h5M876.5 213v5M889 215.5h5M891.5 213v5M903 215.5h5M905.5 213v5M918 215.5h5M920.5 213v5M932 215.5h5M934.5 213v5M947 215.5h5M949.5 213v5M961 215.5h5M963.5 213v5M975 215.5h5M977.5 213v5M716 233.5h5M718.5 231v5M730 233.5h5M732.5 231v5M744 233.5h5M746.5 231v5M759 233.5h5M761.5 231v5M773 233.5h5M775.5 231v5M788 233.5h5M790.5 231v5M802 233.5h5M804.5 231v5M817 233.5h5M819.5 231v5M831 233.5h5M833.5 231v5M846 233.5h5M848.5 231v5M860 233.5h5M862.5 231v5M874 233.5h5M876.5 231v5M889 233.5h5M891.5 231v5M903 233.5h5M905.5 231v5M918 233.5h5M920.5 231v5M932 233.5h5M934.5 231v5M947 233.5h5M949.5 231v5M961 233.5h5M963.5 231v5M975 233.5h5M977.5 231v5M990 233.5h5M992.5 231v5M629 250.5h5M631.5 248v5M730 250.5h5M732.5 248v5M744 250.5h5M746.5 248v5M759 250.5h5M761.5 248v5M773 250.5h5M775.5 248v5M788 250.5h5M790.5 248v5M802 250.5h5M804.5 248v5M817 250.5h5M819.5 248v5M831 250.5h5M833.5 248v5M846 250.5h5M848.5 248v5M860 250.5h5M862.5 248v5M874 250.5h5M876.5 248v5M889 250.5h5M891.5 248v5M903 250.5h5M905.5 248v5M918 250.5h5M920.5 248v5M932 250.5h5M934.5 248v5M947 250.5h5M949.5 248v5M961 250.5h5M963.5 248v5M975 250.5h5M977.5 248v5M990 250.5h5M992.5 248v5M1005 250.5h5M1007.5 248v5M629 268.5h5M631.5 266v5M643 268.5h5M645.5 266v5M658 268.5h5M660.5 266v5M744 268.5h5M746.5 266v5M759 268.5h5M761.5 266v5M773 268.5h5M775.5 266v5M788 268.5h5M790.5 266v5M802 268.5h5M804.5 266v5M817 268.5h5M819.5 266v5M831 268.5h5M833.5 266v5M846 268.5h5M848.5 266v5M860 268.5h5M862.5 266v5M874 268.5h5M876.5 266v5M889 268.5h5M891.5 266v5M903 268.5h5M905.5 266v5M918 268.5h5M920.5 266v5M932 268.5h5M934.5 266v5M947 268.5h5M949.5 266v5M961 268.5h5M963.5 266v5M975 268.5h5M977.5 266v5M990 268.5h5M992.5 266v5M629 285.5h5M631.5 283v5M643 285.5h5M645.5 283v5M759 285.5h5M761.5 283v5M773 285.5h5M775.5 283v5M788 285.5h5M790.5 283v5M802 285.5h5M804.5 283v5M817 285.5h5M819.5 283v5M831 285.5h5M833.5 283v5M846 285.5h5M848.5 283v5M860 285.5h5M862.5 283v5M874 285.5h5M876.5 283v5M889 285.5h5M891.5 283v5M903 285.5h5M905.5 283v5M918 285.5h5M920.5 283v5M932 285.5h5M934.5 283v5M947 285.5h5M949.5 283v5M759 303.5h5M761.5 301v5M773 303.5h5M775.5 301v5M788 303.5h5M790.5 301v5M802 303.5h5M804.5 301v5M817 303.5h5M819.5 301v5M831 303.5h5M833.5 301v5M846 303.5h5M848.5 301v5M860 303.5h5M862.5 301v5M874 303.5h5M876.5 301v5M889 303.5h5M891.5 301v5M802 320.5h5M804.5 318v5M817 320.5h5M819.5 318v5M831 320.5h5M833.5 318v5M846 320.5h5M848.5 318v5M860 320.5h5M862.5 318v5M874 320.5h5M876.5 318v5M788 337.5h5M790.5 335v5M802 337.5h5M804.5 335v5M817 337.5h5M819.5 335v5M831 337.5h5M833.5 335v5M846 337.5h5M848.5 335v5M860 337.5h5M862.5 335v5M629 354.5h5M631.5 352v5M658 354.5h5M660.5 352v5M773 354.5h5M775.5 352v5M788 354.5h5M790.5 352v5M802 354.5h5M804.5 352v5M817 354.5h5M819.5 352v5M831 354.5h5M833.5 352v5M773 371.5h5M775.5 369v5M788 371.5h5M790.5 369v5M658 387.5h5M660.5 385v5M672 387.5h5M674.5 385v5M687 387.5h5M689.5 385v5M701 387.5h5M703.5 385v5M716 387.5h5M718.5 385v5M730 387.5h5M732.5 385v5M744 387.5h5M746.5 385v5M759 387.5h5M761.5 385v5M773 387.5h5M775.5 385v5M788 387.5h5M790.5 385v5M629 404.5h5M631.5 402v5M643 404.5h5M645.5 402v5M658 404.5h5M660.5 402v5M672 404.5h5M674.5 402v5M687 404.5h5M689.5 402v5M701 404.5h5M703.5 402v5M716 404.5h5M718.5 402v5M730 404.5h5M732.5 402v5M744 404.5h5M746.5 402v5M759 404.5h5M761.5 402v5M773 404.5h5M775.5 402v5M629 421.5h5M631.5 419v5M643 421.5h5M645.5 419v5M658 421.5h5M660.5 419v5M672 421.5h5M674.5 419v5M687 421.5h5M689.5 419v5M716 421.5h5M718.5 419v5M730 421.5h5M732.5 419v5M744 421.5h5M746.5 419v5M629 437.5h5M631.5 435v5M643 437.5h5M645.5 435v5M658 437.5h5M660.5 435v5M672 437.5h5M674.5 435v5M687 437.5h5M689.5 435v5" stroke="#9c9800"/><path d="M658 87.5h5M660.5 85v5M990 87.5h5M992.5 85v5M1005 87.5h5M1007.5 85v5M629 106.5h5M631.5 104v5M643 106.5h5M645.5 104v5M918 106.5h5M920.5 104v5M932 106.5h5M934.5 104v5M947 106.5h5M949.5 104v5M961 106.5h5M963.5 104v5M975 106.5h5M977.5 104v5M990 106.5h5M992.5 104v5M629 125.5h5M631.5 123v5M947 125.5h5M949.5 123v5M629 143.5h5M631.5 141v5M643 143.5h5M645.5 141v5M658 143.5h5M660.5 141v5M672 143.5h5M674.5 141v5M687 143.5h5M689.5 141v5M658 161.5h5M660.5 159v5M672 161.5h5M674.5 159v5M990 161.5h5M992.5 159v5M1005 161.5h5M1007.5 159v5M643 179.5h5M645.5 177v5M658 179.5h5M660.5 177v5M990 179.5h5M992.5 177v5M1005 179.5h5M1007.5 177v5M629 197.5h5M631.5 195v5M990 197.5h5M992.5 195v5M1005 197.5h5M1007.5 195v5M629 215.5h5M631.5 213v5M643 215.5h5M645.5 213v5M658 215.5h5M660.5 213v5M672 215.5h5M674.5 213v5M687 215.5h5M689.5 213v5M990 215.5h5M992.5 213v5M1005 215.5h5M1007.5 213v5M629 233.5h5M631.5 231v5M643 233.5h5M645.5 231v5M658 233.5h5M660.5 231v5M672 233.5h5M674.5 231v5M687 233.5h5M689.5 231v5M701 233.5h5M703.5 231v5M1005 233.5h5M1007.5 231v5M643 250.5h5M645.5 248v5M658 250.5h5M660.5 248v5M672 250.5h5M674.5 248v5M687 250.5h5M689.5 248v5M701 250.5h5M703.5 248v5M716 250.5h5M718.5 248v5M672 268.5h5M674.5 266v5M687 268.5h5M689.5 266v5M701 268.5h5M703.5 266v5M716 268.5h5M718.5 266v5M730 268.5h5M732.5 266v5M1005 268.5h5M1007.5 266v5M658 285.5h5M660.5 283v5M672 285.5h5M674.5 283v5M687 285.5h5M689.5 283v5M701 285.5h5M703.5 283v5M716 285.5h5M718.5 283v5M730 285.5h5M732.5 283v5M744 285.5h5M746.5 283v5M961 285.5h5M963.5 283v5M975 285.5h5M977.5 283v5M990 285.5h5M992.5 283v5M1005 285.5h5M1007.5 283v5M629 303.5h5M631.5 301v5M643 303.5h5M645.5 301v5M658 303.5h5M660.5 301v5M672 303.5h5M674.5 301v5M687 303.5h5M689.5 301v5M701 303.5h5M703.5 301v5M716 303.5h5M718.5 301v5M730 303.5h5M732.5 301v5M744 303.5h5M746.5 301v5M903 303.5h5M905.5 301v5M918 303.5h5M920.5 301v5M932 303.5h5M934.5 301v5M947 303.5h5M949.5 301v5M961 303.5h5M963.5 301v5M975 303.5h5M977.5 301v5M990 303.5h5M992.5 301v5M1005 303.5h5M1007.5 301v5M629 320.5h5M631.5 318v5M643 320.5h5M645.5 318v5M658 320.5h5M660.5 318v5M672 320.5h5M674.5 318v5M687 320.5h5M689.5 318v5M701 320.5h5M703.5 318v5M716 320.5h5M718.5 318v5M730 320.5h5M732.5 318v5M744 320.5h5M746.5 318v5M759 320.5h5M761.5 318v5M773 320.5h5M775.5 318v5M788 320.5h5M790.5 318v5M889 320.5h5M891.5 318v5M903 320.5h5M905.5 318v5M918 320.5h5M920.5 318v5M932 320.5h5M934.5 318v5M947 320.5h5M949.5 318v5M961 320.5h5M963.5 318v5M975 320.5h5M977.5 318v5M990 320.5h5M992.5 318v5M1005 320.5h5M1007.5 318v5M629 337.5h5M631.5 335v5M643 337.5h5M645.5 335v5M658 337.5h5M660.5 335v5M672 337.5h5M674.5 335v5M687 337.5h5M689.5 335v5M701 337.5h5M703.5 335v5M716 337.5h5M718.5 335v5M730 337.5h5M732.5 335v5M744 337.5h5M746.5 335v5M759 337.5h5M761.5 335v5M773 337.5h5M775.5 335v5M874 337.5h5M876.5 335v5M889 337.5h5M891.5 335v5M903 337.5h5M905.5 335v5M918 337.5h5M920.5 335v5M932 337.5h5M934.5 335v5M947 337.5h5M949.5 335v5M961 337.5h5M963.5 335v5M975 337.5h5M977.5 335v5M990 337.5h5M992.5 335v5M1005 337.5h5M1007.5 335v5M643 354.5h5M645.5 352v5M672 354.5h5M674.5 352v5M687 354.5h5M689.5 352v5M701 354.5h5M703.5 352v5M716 354.5h5M718.5 352v5M730 354.5h5M732.5 352v5M744 354.5h5M746.5 352v5M759 354.5h5M761.5 352v5M846 354.5h5M848.5 352v5M860 354.5h5M862.5 352v5M874 354.5h5M876.5 352v5M889 354.5h5M891.5 352v5M903 354.5h5M905.5 352v5M918 354.5h5M920.5 352v5M932 354.5h5M934.5 352v5M947 354.5h5M949.5 352v5M961 354.5h5M963.5 352v5M975 354.5h5M977.5 352v5M990 354.5h5M992.5 352v5M1005 354.5h5M1007.5 352v5M629 371.5h5M631.5 369v5M643 371.5h5M645.5 369v5M658 371.5h5M660.5 369v5M672 371.5h5M674.5 369v5M687 371.5h5M689.5 369v5M701 371.5h5M703.5 369v5M716 371.5h5M718.5 369v5M730 371.5h5M732.5 369v5M744 371.5h5M746.5 369v5M759 371.5h5M761.5 369v5M802 371.5h5M804.5 369v5M817 371.5h5M819.5 369v5M831 371.5h5M833.5 369v5M846 371.5h5M848.5 369v5M860 371.5h5M862.5 369v5M874 371.5h5M876.5 369v5M889 371.5h5M891.5 369v5M903 371.5h5M905.5 369v5M918 371.5h5M920.5 369v5M932 371.5h5M934.5 369v5M947 371.5h5M949.5 369v5M961 371.5h5M963.5 369v5M975 371.5h5M977.5 369v5M990 371.5h5M992.5 369v5M1005 371.5h5M1007.5 369v5M629 387.5h5M631.5 385v5M643 387.5h5M645.5 385v5M802 387.5h5M804.5 385v5M817 387.5h5M819.5 385v5M831 387.5h5M833.5 385v5M846 387.5h5M848.5 385v5M860 387.5h5M862.5 385v5M874 387.5h5M876.5 385v5M889 387.5h5M891.5 385v5M903 387.5h5M905.5 385v5M947 387.5h5M949.5 385v5M961 387.5h5M963.5 385v5M975 387.5h5M977.5 385v5M990 387.5h5M992.5 385v5M1005 387.5h5M1007.5 385v5M788 404.5h5M790.5 402v5M802 404.5h5M804.5 402v5M817 404.5h5M819.5 402v5M831 404.5h5M833.5 402v5M846 404.5h5M848.5 402v5M860 404.5h5M862.5 402v5M874 404.5h5M876.5 402v5M889 404.5h5M891.5 402v5M918 404.5h5M920.5 402v5M932 404.5h5M934.5 402v5M947 404.5h5M949.5 402v5M961 404.5h5M963.5 402v5M975 404.5h5M977.5 402v5M990 404.5h5M992.5 402v5M1005 404.5h5M1007.5 402v5M701 421.5h5M703.5 419v5M759 421.5h5M761.5 419v5M773 421.5h5M775.5 419v5M788 421.5h5M790.5 419v5M802 421.5h5M804.5 419v5M817 421.5h5M819.5 419v5M831 421.5h5M833.5 419v5M846 421.5h5M848.5 419v5M860 421.5h5M862.5 419v5M874 421.5h5M876.5 419v5M889 421.5h5M891.5 419v5M903 421.5h5M905.5 419v5M918 421.5h5M920.5 419v5M932 421.5h5M934.5 419v5M947 421.5h5M949.5 419v5M961 421.5h5M963.5 419v5M975 421.5h5M977.5 419v5M990 421.5h5M992.5 419v5M1005 421.5h5M1007.5 419v5M701 437.5h5M703.5 435v5M716 437.5h5M718.5 435v5M730 437.5h5M732.5 435v5M744 437.5h5M746.5 435v5M759 437.5h5M761.5 435v5M773 437.5h5M775.5 435v5M788 437.5h5M790.5 435v5M802 437.5h5M804.5 435v5M817 437.5h5M819.5 435v5M831 437.5h5M833.5 435v5M846 437.5h5M848.5 435v5M860 437.5h5M862.5 435v5M874 437.5h5M876.5 435v5M889 437.5h5M891.5 435v5M903 437.5h5M905.5 435v5M918 437.5h5M920.5 435v5M932 437.5h5M934.5 435v5M947 437.5h5M949.5 435v5M961 437.5h5M963.5 435v5M975 437.5h5M977.5 435v5M990 437.5h5M992.5 435v5M1005 437.5h5M1007.5 435v5M629 453.5h5M631.5 451v5M643 453.5h5M645.5 451v5M658 453.5h5M660.5 451v5M672 453.5h5M674.5 451v5M687 453.5h5M689.5 451v5M701 453.5h5M703.5 451v5M716 453.5h5M718.5 451v5M730 453.5h5M732.5 451v5M744 453.5h5M746.5 451v5M759 453.5h5M761.5 451v5M773 453.5h5M775.5 451v5M788 453.5h5M790.5 451v5M802 453.5h5M804.5 451v5M817 453.5h5M819.5 451v5M831 453.5h5M833.5 451v5M846 453.5h5M848.5 451v5M860 453.5h5M862.5 451v5M874 453.5h5M876.5 451v5M889 453.5h5M891.5 451v5M903 453.5h5M905.5 451v5M918 453.5h5M920.5 451v5M932 453.5h5M934.5 451v5M961 453.5h5M963.5 451v5M975 453.5h5M977.5 451v5M1005 453.5h5M1007.5 451v5M629 469.5h5M631.5 467v5M643 469.5h5M645.5 467v5M658 469.5h5M660.5 467v5M672 469.5h5M674.5 467v5M687 469.5h5M689.5 467v5M701 469.5h5M703.5 467v5M716 469.5h5M718.5 467v5M730 469.5h5M732.5 467v5M744 469.5h5M746.5 467v5M759 469.5h5M761.5 467v5M773 469.5h5M775.5 467v5M788 469.5h5M790.5 467v5M802 469.5h5M804.5 467v5M817 469.5h5M819.5 467v5M831 469.5h5M833.5 467v5M846 469.5h5M848.5 467v5M860 469.5h5M862.5 467v5M874 469.5h5M876.5 467v5M889 469.5h5M891.5 467v5M903 469.5h5M905.5 467v5M918 469.5h5M920.5 467v5M961 469.5h5M963.5 467v5" stroke="#58ffff"/><path d="M716 87.5h5M718.5 85v5M759 87.5h5M761.5 85v5M773 87.5h5M775.5 85v5M788 87.5h5M790.5 85v5M802 87.5h5M804.5 85v5M817 87.5h5M819.5 85v5M831 87.5h5M833.5 85v5M846 87.5h5M848.5 85v5M860 87.5h5M862.5 85v5M874 87.5h5M876.5 85v5M889 87.5h5M891.5 85v5M730 106.5h5M732.5 104v5M744 106.5h5M746.5 104v5M759 106.5h5M761.5 104v5M773 106.5h5M775.5 104v5M788 106.5h5M790.5 104v5M846 106.5h5M848.5 104v5M860 106.5h5M862.5 104v5M874 106.5h5M876.5 104v5M889 106.5h5M891.5 104v5M903 106.5h5M905.5 104v5M730 125.5h5M732.5 123v5M759 125.5h5M761.5 123v5M773 125.5h5M775.5 123v5M903 125.5h5M905.5 123v5M918 125.5h5M920.5 123v5M932 125.5h5M934.5 123v5M975 125.5h5M977.5 123v5M990 125.5h5M992.5 123v5M1005 125.5h5M1007.5 123v5M932 143.5h5M934.5 141v5M947 143.5h5M949.5 141v5M961 143.5h5M963.5 141v5M975 143.5h5M977.5 141v5" stroke="#5858ff"/><path d="M932 87.5h5M934.5 85v5M947 87.5h5M949.5 85v5M961 87.5h5M963.5 85v5M975 87.5h5M977.5 85v5M629 161.5h5M631.5 159v5M643 161.5h5M645.5 159v5M629 179.5h5M631.5 177v5M918 387.5h5M920.5 385v5M932 387.5h5M934.5 385v5M903 404.5h5M905.5 402v5M947 453.5h5M949.5 451v5M990 453.5h5M992.5 451v5M932 469.5h5M934.5 467v5M947 469.5h5M949.5 467v5M975 469.5h5M977.5 467v5M990 469.5h5M992.5 467v5M1005 469.5h5M1007.5 467v5" stroke="#ff5858"/></g></svg>
<div style="left:-1px;top:32px;width:626px;height:534px;background:#c0c0c0;"></div>
<div style="left:0px;top:33px;width:624px;height:532px;background:#a00808;"></div>
<div style="left:3px;top:36px;width:618px;height:526px;background:#c0c0c0;"></div>
<div style="left:24px;top:33px;width:1px;height:3px;background:#c0c0c0;"></div>
<div style="left:24px;top:562px;width:1px;height:3px;background:#c0c0c0;"></div>
<div style="left:599px;top:33px;width:1px;height:3px;background:#c0c0c0;"></div>
<div style="left:599px;top:562px;width:1px;height:3px;background:#c0c0c0;"></div>
<div style="left:0px;top:57px;width:3px;height:1px;background:#c0c0c0;"></div>
<div style="left:621px;top:57px;width:3px;height:1px;background:#c0c0c0;"></div>
<div style="left:0px;top:540px;width:3px;height:1px;background:#c0c0c0;"></div>
<div style="left:621px;top:540px;width:3px;height:1px;background:#c0c0c0;"></div>
<div style="left:4px;top:37px;width:616px;height:16px;background:#fff;"></div>
<div style="left:4px;top:53px;width:616px;height:33px;background:#a8a8a8;"></div>
<div style="left:4px;top:86px;width:616px;height:475px;background:#000;"></div>
<div class="btn" style="left:4px;top:37px;width:16px;height:16px"><i style="left:4px;top:5px;width:7px;height:3px;background:#000"></i></div>
<span class="t" style="left:272px;top:38px;color:#000;">Tactical</span>
<div class="btn" style="left:587px;top:37px;width:16px;height:16px"><svg width="16" height="16"><path d="M4.5 6.5h7l-3.5 3.5z" fill="#000"/></svg></div>
<div class="btn" style="left:604px;top:37px;width:16px;height:16px"><svg width="16" height="16"><path d="M4.5 9.5h7l-3.5 -3.5z" fill="#000"/></svg></div>
<div style="left:0;top:0"><svg class="icb" style="left:5px;top:55px" width="29" height="29" viewBox="0 0 29 29"><rect x="2" y="2" width="25" height="2" fill="#707070"/><rect x="2" y="4" width="25" height="5" fill="#f00"/><rect x="2" y="9" width="25" height="5" fill="#0f0"/><rect x="2" y="14" width="25" height="5" fill="#ff0"/><rect x="2" y="19" width="25" height="4" fill="#00f"/><rect x="2" y="23" width="25" height="4" fill="#f0f"/><rect x="2" y="3" width="25" height="2" fill="url(#ckr)"/><rect x="2" y="8" width="25" height="1" fill="url(#ckg)"/><rect x="2" y="9" width="25" height="1" fill="url(#ckr)"/><rect x="2" y="13" width="25" height="1" fill="url(#cky)"/><rect x="2" y="14" width="25" height="1" fill="url(#ckg)"/><rect x="2" y="18" width="25" height="1" fill="url(#ckb)"/><rect x="2" y="19" width="25" height="1" fill="url(#cky)"/><rect x="2" y="22" width="25" height="1" fill="url(#ckm)"/><rect x="2" y="23" width="25" height="1" fill="url(#ckb)"/><clipPath id="c1"><rect x="2" y="2" width="25" height="25"/></clipPath><g clip-path="url(#c1)"><path d="M10.260000000000002 18.54L2.5 27" stroke="#402010" stroke-width="4"/><path d="M10.260000000000002 18.54L2.5 27" stroke="#d09878" stroke-width="2.5"/><circle cx="16" cy="12.8" r="8.2" fill="none" stroke="#484848" stroke-width="2.2"/><circle cx="16" cy="12.8" r="8.2" fill="none" stroke="#a8a8b0" stroke-width="1" stroke-dasharray="2 2"/><path d="M20.1 5.830000000000002A8.2 8.2 0 0 1 17.64 20.836" fill="none" stroke="#e0e0f0" stroke-width="1" stroke-dasharray="1.5 1.5"/><rect x="10.5" y="11" width="10.5" height="3" fill="#000"/><rect x="14.4" y="7.5" width="2.6" height="10" fill="#000"/><path d="M11.5 10.5q0.5-3.5 4.5-3.5t4.5 2.5" fill="none" stroke="#fff" stroke-width="1.2"/></g><path d="M0 0h29l-2 2h-25v25l-2 2z" fill="#fff"/><path d="M29 0v29h-29l2-2h25v-25z" fill="#585858"/></svg><svg class="icb" style="left:36px;top:55px" width="29" height="29" viewBox="0 0 29 29"><rect x="2" y="2" width="25" height="2" fill="#707070"/><rect x="2" y="4" width="25" height="5" fill="#f00"/><rect x="2" y="9" width="25" height="5" fill="#0f0"/><rect x="2" y="14" width="25" height="5" fill="#ff0"/><rect x="2" y="19" width="25" height="4" fill="#00f"/><rect x="2" y="23" width="25" height="4" fill="#f0f"/><rect x="2" y="3" width="25" height="2" fill="url(#ckr)"/><rect x="2" y="8" width="25" height="1" fill="url(#ckg)"/><rect x="2" y="9" width="25" height="1" fill="url(#ckr)"/><rect x="2" y="13" width="25" height="1" fill="url(#cky)"/><rect x="2" y="14" width="25" height="1" fill="url(#ckg)"/><rect x="2" y="18" width="25" height="1" fill="url(#ckb)"/><rect x="2" y="19" width="25" height="1" fill="url(#cky)"/><rect x="2" y="22" width="25" height="1" fill="url(#ckm)"/><rect x="2" y="23" width="25" height="1" fill="url(#ckb)"/><g clip-path="url(#c1)"><path d="M10.260000000000002 18.54L2.5 27" stroke="#402010" stroke-width="4"/><path d="M10.260000000000002 18.54L2.5 27" stroke="#d09878" stroke-width="2.5"/><circle cx="16" cy="12.8" r="8.2" fill="none" stroke="#484848" stroke-width="2.2"/><circle cx="16" cy="12.8" r="8.2" fill="none" stroke="#a8a8b0" stroke-width="1" stroke-dasharray="2 2"/><path d="M20.1 5.830000000000002A8.2 8.2 0 0 1 17.64 20.836" fill="none" stroke="#e0e0f0" stroke-width="1" stroke-dasharray="1.5 1.5"/><rect x="10.5" y="11" width="10.5" height="3" fill="#000"/><path d="M11.5 10.5q0.5-3.5 4.5-3.5t4.5 2.5" fill="none" stroke="#fff" stroke-width="1.2"/></g><path d="M0 0h29l-2 2h-25v25l-2 2z" fill="#fff"/><path d="M29 0v29h-29l2-2h25v-25z" fill="#585858"/></svg><svg class="icb" style="left:67px;top:55px" width="29" height="29" viewBox="0 0 29 29"><rect x="2" y="2" width="25" height="1" fill="#707070"/><rect x="2" y="3" width="25" height="11" fill="#f00"/><rect x="2" y="14" width="25" height="9" fill="#0f0"/><rect x="2" y="23" width="25" height="4" fill="#ff0"/><rect x="4.5" y="4.5" width="20" height="20.5" fill="#000" stroke="#0000a0" stroke-width="1"/><rect x="5" y="5" width="19" height="2.6" fill="#8080ff"/><rect x="22" y="5" width="2" height="2" fill="#fff"/><path d="M13.5 19.5L9 24" stroke="#f0c0a0" stroke-width="2"/><circle cx="17" cy="14.2" r="4.6" fill="none" stroke="#c8c8c8" stroke-width="1.2"/><circle cx="17" cy="14.2" r="4.6" fill="none" stroke="#a060c0" stroke-width="1.2" stroke-dasharray="1 3"/><rect x="18" y="11" width="1" height="1" fill="#fff"/><path d="M0 0h29l-2 2h-25v25l-2 2z" fill="#fff"/><path d="M29 0v29h-29l2-2h25v-25z" fill="#585858"/></svg><svg class="icb" style="left:98px;top:55px" width="29" height="29" viewBox="0 0 29 29"><rect x="2" y="2" width="25" height="25" fill="#000"/><rect x="12.9" y="15.2" width="9.1" height="2.8" fill="#fff"/><rect x="16" y="18" width="2.9" height="7" fill="#fff"/><circle cx="21.6" cy="8.2" r="3.1" fill="none" stroke="#8080ff" stroke-width="1.1"/><rect x="21" y="6.8" width="1.1" height="3" fill="#8080ff"/><path d="M12.4 4.4l4.2 3.8-4.2 3.8" fill="none" stroke="#e0a070" stroke-width="1.5"/><path d="M12.6 8.2h3.4" stroke="#e0a070" stroke-width="2"/><rect x="8.9" y="7.1" width="1.9" height="1" fill="#e0a070"/><rect x="9.3" y="8.2" width="1.4" height="1" fill="#800080"/><rect x="7.9" y="9.8" width="2" height="2" fill="#404040"/><rect x="6.9" y="12.9" width="2" height="2" fill="#808080"/><rect x="6" y="15.8" width="2" height="2" fill="#a8a8a8"/><rect x="5.1" y="18.9" width="2" height="2" fill="#d0d0d0"/><rect x="3.9" y="22" width="2" height="2" fill="#fff"/><path d="M0 0h29l-2 2h-25v25l-2 2z" fill="#fff"/><path d="M29 0v29h-29l2-2h25v-25z" fill="#585858"/></svg><svg class="icb" style="left:129px;top:55px" width="29" height="29" viewBox="0 0 29 29"><rect x="2" y="2" width="25" height="12.5" fill="url(#sun)"/><rect x="2" y="2" width="25" height="1" fill="#d0d000"/><rect x="2" y="3" width="25" height="1" fill="url(#cky)"/><rect x="2" y="14.2" width="25" height="1.6" fill="#202020"/><rect x="2" y="15.8" width="25" height="11.2" fill="url(#gry)"/><g font-family="Liberation Sans" font-weight="bold" font-size="11.3" fill="#0000a0" stroke="#0000a0" stroke-width="0.5"><text x="4" y="12.7" textLength="21.4" lengthAdjust="spacingAndGlyphs">PR</text><text x="4" y="24.9" textLength="20.6" lengthAdjust="spacingAndGlyphs">EF</text></g><path d="M0 0h29l-2 2h-25v25l-2 2z" fill="#fff"/><path d="M29 0v29h-29l2-2h25v-25z" fill="#585858"/></svg><svg class="icb" style="left:160px;top:55px" width="29" height="29" viewBox="0 0 29 29"><rect x="2" y="2" width="25" height="25" fill="url(#sky)"/><rect x="2" y="2" width="25" height="25" fill="url(#ckw)" opacity="0.18"/><path d="M2.5 16l2.5 1.5 1-2 2 3.5 3 0.5-1 3 2.5 1-1 2.5-4-0.5-2 1.5-3-0.5z" fill="#f4ecec"/><path d="M4 20l2 0.5 1.5 2.5-2 2-2-1z" fill="#ff7070"/><path d="M6.5 21.5l2 1 0.5 2-1.5 0.5z" fill="#f0e020"/><path d="M25 4.6L8.4 23.2" stroke="#000" stroke-width="1.3"/><path d="M24.3 4.3L14.3 15.4" stroke="#fff" stroke-width="1.2"/><path d="M14.3 15.4L7.6 22.8" stroke="#f0e020" stroke-width="1.6"/><path d="M24.8 3.8l-1.8 2" stroke="#d00000" stroke-width="1.5"/><path d="M11.2 13.2h3.2l-1.8 2zM15.2 15.6l1.8 0.4-0.2 3.2-1.8-1.4z" fill="#900000"/><path d="M9.4 22.4l4 4.6" stroke="#a040a0" stroke-width="0.8"/><path d="M0 0h29l-2 2h-25v25l-2 2z" fill="#fff"/><path d="M29 0v29h-29l2-2h25v-25z" fill="#585858"/></svg><svg class="icb" style="left:190px;top:55px" width="29" height="29" viewBox="0 0 29 29"><rect x="2" y="2" width="25" height="25" fill="url(#sky)"/><rect x="2" y="2" width="25" height="25" fill="url(#ckw)" opacity="0.18"/><path d="M7.5 5.2l11 0.3-3.4 3.2v5.3h-9.7v-6z" fill="#101010"/><path d="M6.5 6.4h9v7.4h-9z" fill="url(#ckw)" opacity="0.75"/><path d="M6 14.2l9.5 0 3 3.6-10 0.4z" fill="#c8c020"/><path d="M7 15.4h9" stroke="#40c040" stroke-width="0.9" stroke-dasharray="1 1.5"/><path d="M5.6 8v6.5l3 3.8h15v-6.8h-4.3" fill="none" stroke="#000" stroke-width="1.3"/><path d="M18.6 10.6h5.2" stroke="#fff" stroke-width="1"/><rect x="10.8" y="19.4" width="4.6" height="7.6" fill="#303030"/><rect x="13" y="19.4" width="1" height="7.6" fill="#ff6060"/><rect x="14" y="19.4" width="0.9" height="7.6" fill="#d0b020"/><rect x="6.5" y="21" width="4.3" height="1" fill="#ff4040"/><rect x="16.2" y="21" width="1" height="1" fill="#ff4040"/><path d="M0 0h29l-2 2h-25v25l-2 2z" fill="#fff"/><path d="M29 0v29h-29l2-2h25v-25z" fill="#585858"/></svg><svg class="icb" style="left:221px;top:55px" width="29" height="29" viewBox="0 0 29 29"><rect width="29" height="29" fill="#a8a8a8"/><g transform="translate(0.6,0.6)"><rect x="2" y="2" width="25" height="25" fill="url(#sky)"/><rect x="2" y="2" width="25" height="25" fill="url(#ckw)" opacity="0.18"/><rect x="2" y="19.2" width="25" height="7.8" fill="#006000"/><path d="M2 22.5l4-0.5 3-2.5 6-0.3 3 2 5-1 4 1.5v5.3h-8l-1-2.5-6 0.5-2 2h-8z" fill="#00e0e0"/><path d="M9 24l5-2 4 1-3 2z" fill="#008000"/><path d="M14.6 7.4L8.6 22.4M14.6 7.4L20.4 22.4" stroke="#202020" stroke-width="1.5" fill="none"/><path d="M16 11l4.4 11.4" stroke="#a09020" stroke-width="1.3"/><path d="M7 16.4h15" stroke="#202020" stroke-width="1.1"/><circle cx="14.6" cy="8" r="1.6" fill="none" stroke="#202020" stroke-width="1.2"/><rect x="14" y="4.8" width="1" height="2.4" fill="#ff4040"/><rect x="15.6" y="7" width="1.2" height="1.8" fill="#ff4040"/><rect x="14.2" y="15.4" width="1.2" height="1.6" fill="#ff4040"/></g><path d="M0 0h29v2h-27v27h-2z" fill="#585858"/></svg><svg class="icb" style="left:251px;top:55px" width="29" height="29" viewBox="0 0 29 29"><rect x="2" y="2" width="25" height="25" fill="url(#tan)"/><rect x="2" y="2" width="25" height="25" fill="url(#ckw)" opacity="0.2"/><circle cx="14.6" cy="13" r="7.4" fill="#000"/><rect x="11.4" y="19" width="7.2" height="8" fill="#000"/><path d="M9.2 14.2q1.2 5.2 5.4 5.2t5.6-5.2l1.2 0.6q-1.6 6-6.8 6t-6.6-6z" fill="#fff"/><path d="M10 10.5h2.6v2h-2.6zM18.5 11h2v2.4h-2z" fill="#fff"/><path d="M12.8 9h1.8v1.5h-1.8z" fill="#fff"/><path d="M11.8 13.6q0.5 3 3 3t3-3" fill="none" stroke="#f05050" stroke-width="1.7"/><path d="M9.2 9.2l4.8 4.6 9-9" fill="none" stroke="#f04040" stroke-width="1.5"/><rect x="21.2" y="3.8" width="2.4" height="2" fill="#fff"/><rect x="10" y="19.6" width="1" height="7.4" fill="#40c040"/><path d="M0 0h29l-2 2h-25v25l-2 2z" fill="#fff"/><path d="M29 0v29h-29l2-2h25v-25z" fill="#585858"/></svg><svg class="icb" style="left:282px;top:55px" width="29" height="29" viewBox="0 0 29 29"><rect x="2" y="2" width="25" height="11" fill="url(#sky)"/><rect x="2" y="13" width="25" height="10" fill="#00c0c0"/><rect x="2" y="21" width="25" height="6" fill="#c8e8e8"/><rect x="15" y="21" width="12" height="4" fill="#60d0d0"/><path d="M6 21l12 0.5-4 5.5h-12z" fill="#d8d8ff"/><path d="M11 26l7.4-4.8-3 5.8z" fill="#000"/><path d="M24.6 6L12 17" stroke="#101010" stroke-width="2.6"/><path d="M22.5 7.6L17 12.6" stroke="#a0a020" stroke-width="1"/><path d="M14 14.4L2.6 24.6" stroke="#f4f4f4" stroke-width="3"/><path d="M12.5 15.8l-7 6.2" stroke="#e04040" stroke-width="0.9" stroke-dasharray="1 1.4"/><path d="M8.6 11.6l6.8-1.8 1 1.8-4.8 2z" fill="#181818"/><path d="M18.4 13l2.4-2.4 2 1.6 0.6 3.4-2.4-1z" fill="#302020"/><path d="M2.6 26.6l3-3" stroke="#8040a0" stroke-width="1"/><path d="M0 0h29l-2 2h-25v25l-2 2z" fill="#fff"/><path d="M29 0v29h-29l2-2h25v-25z" fill="#585858"/></svg><svg class="icb" style="left:312px;top:55px" width="29" height="29" viewBox="0 0 29 29"><rect x="2" y="2" width="25" height="25" fill="#000"/><g fill="none" stroke="#008800"><circle cx="14.6" cy="14.4" r="10.6" stroke-width="1.4"/><circle cx="14.6" cy="14.4" r="6.4" stroke-width="1.2"/><circle cx="14.6" cy="14.4" r="2.2" stroke-width="1.1"/><path d="M4 14.4h21.2M14.6 3.8v21.2" stroke-width="1"/><path d="M7.4 7.2l4.6 4.6M17.2 17l4.6 4.6M21.8 7.2l-4.6 4.6M12 17l-4.6 4.6" stroke-width="0.6"/></g><path d="M0 0h29l-2 2h-25v25l-2 2z" fill="#fff"/><path d="M29 0v29h-29l2-2h25v-25z" fill="#585858"/></svg><svg class="icb" style="left:343px;top:55px" width="29" height="29" viewBox="0 0 29 29"><rect x="2" y="2" width="25" height="25" fill="url(#tan)"/><rect x="2" y="2" width="25" height="25" fill="url(#ckw)" opacity="0.2"/><rect x="7.4" y="11" width="1.2" height="14" fill="#201008"/><path d="M2.6 25.4l2.6-2.8h2.3l2.8 2.8z" fill="#000"/><rect x="5.2" y="10" width="2.3" height="15" fill="#fff"/><rect x="5.5" y="8.4" width="1.5" height="1.8" fill="#e02020"/><rect x="4.9" y="12.4" width="3" height="0.9" fill="#f02020"/><rect x="4.9" y="21" width="3" height="0.9" fill="#f02020"/><rect x="15.3" y="8" width="1.2" height="17" fill="#201008"/><path d="M10.5 25.4l2.6-2.8h2.3l2.8 2.8z" fill="#000"/><rect x="13.1" y="7" width="2.3" height="18" fill="#fff"/><rect x="13.4" y="5.4" width="1.5" height="1.8" fill="#e02020"/><rect x="12.799999999999999" y="9.4" width="3" height="0.9" fill="#f02020"/><rect x="12.799999999999999" y="21" width="3" height="0.9" fill="#f02020"/><rect x="23.3" y="11" width="1.2" height="14" fill="#201008"/><path d="M18.5 25.4l2.6-2.8h2.3l2.8 2.8z" fill="#000"/><rect x="21.1" y="10" width="2.3" height="15" fill="#fff"/><rect x="21.400000000000002" y="8.4" width="1.5" height="1.8" fill="#e02020"/><rect x="20.8" y="12.4" width="3" height="0.9" fill="#f02020"/><rect x="20.8" y="21" width="3" height="0.9" fill="#f02020"/><path d="M0 0h29l-2 2h-25v25l-2 2z" fill="#fff"/><path d="M29 0v29h-29l2-2h25v-25z" fill="#585858"/></svg><svg class="icb" style="left:373px;top:55px" width="29" height="29" viewBox="0 0 29 29"><rect x="2" y="2" width="25" height="25" fill="#000"/><path d="M5.3 16.4L15.4 5.6l8.2 7.7-10 10.3-4.4-5.4" fill="none" stroke="#f8f840" stroke-width="1.3"/><path d="M7.8 17l5 0.3-2.6 1.6-1.8 3z" fill="#f8f840"/><path d="M0 0h29l-2 2h-25v25l-2 2z" fill="#fff"/><path d="M29 0v29h-29l2-2h25v-25z" fill="#585858"/></svg></div>
<svg style="left:4px;top:86px;will-change:transform" width="616" height="475" viewBox="4 86 616 475"><path d="M99.1 138.4L101.1 135.0L104.2 134.1L106.9 135.3L108.4 136.9L112.0 137.7L113.6 136.6L110.9 131.4L114.1 128.3L119.1 127.5L123.0 125.2L127.7 122.3L130.8 123.3L131.2 128.3L129.2 130.6L131.6 133.0L131.2 136.1L128.1 136.9L125.0 135.3L126.6 137.7L123.4 140.0L124.2 143.9L121.9 144.7L120.3 147.0L118.0 146.2L114.7 147.8L113.1 143.9L112.5 150.2L110.2 149.4L110.9 152.5L107.8 153.3L105.5 157.5L101.6 154.1L98.8 151.4L102.3 152.5L104.7 148.6L107.0 147.0L103.9 145.5L101.1 145.9L99.1 138.4M94.4 166.1L97.5 162.7L100.6 160.3L101.6 165.8L100.0 169.4L96.9 168.9L94.4 166.1M97.5 171.2L99.1 172.0L98.0 173.6M97.5 174.4L98.4 177.5L96.9 183.8L98.0 179.1L97.5 174.4M96.4 186.9L97.5 187.7L96.4 190.8L96.4 186.9M112.5 167.3L116.2 161.9L118.8 163.4L121.9 159.5L125.0 156.4L128.1 160.3L128.9 168.1L132.0 174.4L134.7 176.2L140.9 174.7L147.5 172.3L153.8 170.5L149.5 173.6L144.4 175.9L141.2 179.4L136.6 184.8L135.9 180.9L132.0 182.2L127.3 179.8L123.4 175.9L121.9 172.0L118.8 174.4L114.7 172.0L112.5 167.3M134.7 162.2L135.5 168.1L134.4 167.3L134.7 162.2M232.3 115.0L226.9 115.3L220.6 114.2L219.8 116.2L211.2 116.6L208.1 118.9L201.1 117.3L200.3 119.7L187.8 120.5L185.9 124.4L187.0 119.4L181.6 118.1L180.0 121.2L175.6 124.4L177.7 119.7L175.6 117.3L173.0 116.6L168.8 116.2L164.7 121.2L167.8 125.2L164.4 128.3L167.8 131.4L170.9 134.5L166.2 133.0L161.6 134.5L156.9 133.4L157.8 137.7L160.0 140.0L153.8 140.8L156.9 144.7L161.6 148.6L165.6 151.7L160.0 150.2L156.9 147.8L153.8 150.2L150.0 148.1L146.9 149.4L149.1 154.1L144.4 151.7L141.2 152.5L142.8 156.4L145.3 157.2L142.2 161.9L146.9 165.0L151.6 165.5L146.9 166.6L142.2 164.2L140.6 168.1L142.8 172.0L141.2 174.4L147.2 176.7L153.4 177.5L156.6 179.1L150.6 180.6L147.5 183.8L153.8 184.5L150.0 187.7L147.5 190.0L144.4 188.4L141.2 192.3L145.3 193.9L139.7 196.2L142.8 199.4L135.0 200.2L128.8 201.7L133.4 203.3L141.2 202.5L150.0 201.7L145.9 204.8L138.1 205.6L131.2 205.6L128.8 208.8M232.3 115.0L231.2 118.9L232.8 122.8L230.8 123.6L229.2 128.3L226.1 130.9L220.6 132.2L217.5 135.3L213.6 139.2L208.1 142.3L202.7 145.5L200.3 150.2L194.8 151.2L201.1 152.2L208.4 151.2L205.0 156.4L200.3 160.3L196.4 164.2L192.5 166.6L198.8 166.2L200.3 162.7L209.7 160.3L217.5 157.5L225.3 157.2L230.8 158.8L240.0 157.5M186.2 163.4L190.2 159.5L195.6 158.0L200.3 156.4L203.4 153.3M122.5 204.5L119.8 209.5M165.2 196.2L161.2 197.8L159.7 200.9L166.7 201.2L161.2 202.5L157.3 206.4L155.0 209.5M221.4 99.7L224.5 101.7L226.1 99.1L230.8 99.7L233.9 102.2L237.0 100.6L239.4 103.3L234.7 104.8L233.9 107.2L232.3 105.6M221.4 104.1L223.0 106.4L221.4 107.2L221.4 104.1M128.9 200.8L135.9 202.8L143.8 201.2L150.0 202.3L145.3 203.9L139.1 203.4L141.4 207.0L144.5 210.9L141.4 214.8L139.8 217.2L133.6 215.6L128.9 215.6L133.6 213.8L136.7 211.7L132.0 209.4L128.9 206.2L128.9 200.8M133.6 204.7L137.5 208.6L143.8 210.9M122.7 203.9L119.5 209.4M160.2 200.0L166.4 201.2L160.9 203.9L156.2 207.0L153.9 211.7L160.2 213.3L153.1 214.1L149.7 218.0L150.0 223.4L150.8 226.6L148.4 229.7L146.1 233.6L149.7 236.7L146.9 240.6L151.6 239.8L153.9 239.1M153.9 239.1L150.0 242.2L146.9 245.3L145.3 251.6L143.0 258.6L143.8 262.5L146.1 263.3L150.8 260.2L152.3 253.1L153.9 246.1L155.5 242.2L158.6 241.4M125.0 241.4L128.9 237.5L133.6 233.6L138.3 228.9L143.0 224.2L141.4 230.5L137.5 236.7L135.2 240.6L132.0 237.5L130.5 242.2L128.1 242.2L127.3 246.1L125.0 245.3L125.0 241.4M130.5 242.2L133.6 246.1L135.2 246.9L132.0 251.6L130.5 249.2L129.7 245.3M130.5 229.7L131.2 228.9M158.6 246.9L161.7 245.3L164.1 246.9L165.3 253.9L163.3 256.2L160.2 255.5L158.6 246.9M153.9 231.2L153.1 235.2L156.2 239.1L154.7 232.0L157.8 230.5L158.6 237.5L160.2 235.2L161.7 233.6L163.3 237.5L165.6 233.6L167.2 239.1L168.0 243.8L169.5 237.5L171.1 233.6M170.3 220.3L165.6 224.2L161.7 226.6L158.6 229.7L157.0 232.8M171.1 225.0L173.4 228.9L175.0 227.3L174.7 232.0L185.2 235.2L177.3 233.6L172.7 233.6L171.1 239.1L172.7 244.5L176.6 248.4L178.1 250.0L180.5 253.9L175.8 258.6L172.7 264.1L169.5 268.8L167.2 271.9L166.4 275.8L168.0 278.1L164.8 278.9L164.1 275.8L162.5 277.3L163.3 280.5L167.2 284.4L169.5 286.7L172.7 289.1L171.9 290.6L170.3 289.8L170.3 285.2L173.4 280.5L178.1 282.0L182.8 285.9L187.5 288.3L189.1 282.8L187.5 278.1L191.4 282.0L193.8 280.5L196.9 285.2L203.1 285.2L206.2 281.2L215.6 279.7L223.4 276.6L232.8 275.3L231.2 278.1L225.0 277.3L223.4 280.5L220.3 281.2L215.6 289.8L212.5 295.3L218.8 301.6L220.3 306.2L225.0 309.4L226.6 306.2L227.3 312.5L229.7 313.3L232.8 309.4L235.9 310.9L239.1 310.2L238.3 315.6L235.9 316.4L237.5 319.5M251.6 200.0L249.2 206.2L242.2 210.2L237.5 212.5L229.7 214.1L222.7 216.4L229.7 214.8L237.5 213.3L239.8 216.4L246.1 219.5L243.0 222.7L238.3 224.2L232.8 223.4L228.9 226.6L227.3 229.7L218.8 230.5L210.2 230.5L210.9 232.8L221.9 233.6L232.8 234.4L237.5 232.0L239.8 228.9L244.5 228.9L246.9 231.2L252.3 233.6L260.0 236.7M100.0 263.3L104.7 264.1L107.0 267.2L104.7 271.9L101.6 273.4L100.0 272.7M107.0 268.0L114.1 266.4L119.5 264.1L123.4 264.1L127.3 265.6L132.8 265.3L135.2 267.2L135.6 271.9L137.5 275.0L141.4 278.9L145.3 282.0L144.5 285.9L141.4 287.5L139.1 290.6L141.4 291.4L144.5 288.3L150.0 288.3L153.1 293.0L154.4 298.4L153.1 303.1L149.2 303.1L146.9 302.3L149.2 297.7L146.9 293.8L146.1 296.1L148.4 300.0L150.0 304.7L148.4 307.0L142.2 307.8L139.8 310.9L138.3 314.8L132.8 316.4L128.9 314.8L130.5 317.2L125.0 318.0L124.2 319.5M175.8 312.5L178.1 307.8L182.8 303.1L189.1 300.0L189.8 304.7L186.7 310.2L181.2 314.8L176.6 314.8L175.8 312.5M48.4 290.0L54.7 292.3L59.4 290.8L56.2 294.7L62.5 291.6L68.0 290.8L64.1 296.2L59.4 297.8L54.7 301.7L50.8 303.3L55.5 304.8L53.1 305.6L55.5 309.5L50.0 306.4L45.3 307.2L38.3 305.6L35.2 310.3L32.0 304.8L15.6 304.1L13.3 303.3L10.9 305.6L7.8 304.8L4.7 307.2L5.5 311.1L8.6 310.3L11.7 312.7L10.2 315.0L12.5 317.3L14.1 321.2L21.1 321.2L21.1 325.2L17.2 327.5L10.9 328.3L10.2 333.8L4.7 335.3L3.9 340.0L4.7 342.3L9.4 343.9L14.1 343.1L14.8 345.5L18.8 344.7L21.1 349.4L27.3 350.2L36.7 348.6L41.4 348.6L42.2 351.7L39.1 353.3L32.8 353.3L28.1 357.2L27.3 361.9L24.2 366.6L21.9 369.7L16.4 372.0L9.4 377.5L17.2 375.9L21.9 374.4L29.7 375.2L35.9 373.6L37.5 369.7L40.6 369.7L41.4 372.0L48.4 373.6L42.2 372.8L39.1 375.2L32.0 376.7L26.6 375.9L18.8 379.1L18.8 381.4L10.9 383.8L11.7 387.7L16.4 390.0L9.4 390.8L4.7 388.4L4.4 397.8L9.4 394.7L15.6 395.5L9.4 397.8L4.4 399.4M6.2 409.5L12.5 407.2L20.3 406.4M58.6 406.4L62.5 405.6L66.4 406.4L62.5 408.8L58.6 406.4M71.1 407.2L75.0 405.6L74.2 403.3L81.2 401.7L85.9 399.4L85.2 397.0L89.1 395.5L99.2 395.0L103.1 393.1L106.2 395.5L104.7 390.0L107.8 394.7L110.9 390.8L115.6 393.1L123.4 392.3L125.0 393.1L126.2 390.0L123.4 389.2L122.7 386.9L125.0 383.8L128.9 379.8L130.5 372.8L132.8 366.6L135.9 360.3L135.2 352.5L132.8 348.6L129.7 344.7L133.6 343.9L131.2 341.6L133.6 336.1L128.9 330.6L128.1 323.6L124.2 322.0L123.4 318.9L125.8 317.3L131.2 318.1L128.1 315.0L132.8 315.8L138.3 314.2L140.6 308.8L149.2 306.4L152.3 302.5L154.7 297.0L152.3 291.6L151.6 290.0M145.3 294.7L148.4 297.8L150.0 301.7L146.1 302.5L148.4 299.4L146.1 296.2M138.3 290.8L140.6 292.3L143.0 290.0M160.0 404.8L157.8 405.6L158.6 407.2M71.1 407.2L67.2 408.8L62.5 408.4L63.3 410.3L59.4 411.9L55.5 413.4L54.7 417.3L53.1 415.0L50.0 415.8L48.4 418.9L43.8 417.3L39.8 418.9L35.2 418.1L30.5 422.0L27.3 422.0L25.0 418.9L20.3 419.7L15.6 423.6L12.5 422.0L14.1 418.9L18.8 416.6L23.4 414.2L25.8 412.7L21.9 411.1L18.8 414.2L14.1 416.6L9.4 417.3L5.5 416.6L4.4 413.4L7.8 411.9L14.1 410.3L20.3 406.4L15.6 406.9L10.9 408.8L6.2 409.5L4.4 410.3M215.8 290.0L212.2 295.5L215.8 298.6L219.7 302.5L220.5 305.6L222.8 308.8L225.2 308.8L225.9 306.4L225.6 311.9L228.3 314.2L229.8 310.3L233.8 310.3L238.4 309.5L238.1 314.2L235.3 317.3L238.4 318.9L235.3 320.5L231.4 322.0L230.6 326.7L233.8 328.3L238.4 328.3L234.5 329.8L231.4 333.0L229.8 336.9L232.2 340.8L226.7 342.3L230.6 349.4L227.5 343.1L232.2 341.6L233.8 345.5L238.4 347.0L241.6 345.5L236.1 344.7M226.7 346.2L219.7 344.4L213.4 347.0L206.4 346.2L204.8 345.5L203.3 347.8L197.8 348.6L193.1 350.9L190.0 353.3L186.9 358.8L182.2 361.9L177.5 365.0L176.7 368.1L181.4 367.3L183.8 368.9L186.1 365.0L194.7 363.4L196.2 366.6L198.6 371.2L200.9 370.5L197.8 372.0L197.0 376.7L198.6 379.1L202.5 378.3L198.6 380.6L197.0 385.3L194.7 390.0L190.0 392.3L184.5 394.7L178.3 395.5L173.6 400.2L170.5 399.4L165.0 400.9L163.4 403.3L158.8 404.8L158.8 407.2L164.2 406.4L165.0 409.5M179.8 343.1L183.0 343.9L186.1 340.0L190.0 339.7L193.9 341.2L196.2 345.5L198.6 346.2L193.1 350.2L190.0 350.6L186.1 347.0L183.8 343.1M193.9 390.8L186.9 393.9L179.1 395.5L173.6 400.2L165.8 400.9L158.8 404.1L158.8 406.9L164.2 407.2L165.0 411.1L160.3 412.7L172.0 412.7L165.8 414.2L169.7 417.3L173.6 415.0L178.3 415.0L179.8 411.9L187.7 410.0L189.2 413.4L193.1 414.2L198.6 414.2L191.6 416.6L190.8 418.9L200.2 419.7L202.5 416.6L206.4 416.6L209.5 422.0L215.8 425.2L226.7 425.2L230.6 420.5L236.9 418.9L242.3 416.6L247.8 413.4L252.5 409.5L246.2 416.6L241.6 420.5L236.9 422.8L233.8 425.9L233.0 432.2L225.9 434.5L221.2 434.5L215.8 432.2L205.6 432.2L198.6 433.8L193.9 435.3L192.3 438.4L193.9 440.0L190.0 442.3L185.3 440.3L183.0 441.6L182.2 450.2L176.7 454.1L174.4 458.0L168.1 460.3L164.2 466.6L159.5 471.2L154.8 473.6L149.4 474.4L145.5 476.7L145.9 480.3L150.2 479.8L152.5 476.7L156.4 477.5L161.1 483.0L165.8 481.4L165.0 476.7L167.3 473.6L168.1 475.9L172.0 472.8L176.7 468.1L184.5 468.9L193.1 469.7L194.7 467.3L196.2 469.7L203.3 469.7L207.2 473.6L211.9 473.6L213.4 468.9L216.6 466.6L215.8 464.2L218.1 456.4L217.3 454.1L220.5 456.4L226.7 453.3L236.1 452.2L243.1 454.8L250.2 458.0L250.9 461.1L251.7 457.2L256.4 456.4L261.1 458.0L267.3 458.0L268.9 455.6L263.4 454.8L265.0 452.5L269.7 453.3L279.1 452.5L284.5 450.2L290.0 449.4L300.0 449.1M282.2 444.4L287.7 449.4L292.3 447.0L296.2 452.5L294.7 455.6L291.6 459.5L286.9 457.2L281.4 456.4L284.5 454.1L287.7 450.2M266.6 492.3L268.9 494.7L276.7 495.5L282.2 493.1L289.2 493.1L290.0 497.8L287.7 500.2L292.3 506.4L300.0 505.6M266.6 492.3L269.7 497.8L269.7 504.1L274.4 509.5M245.6 501.2L246.9 501.6M261.9 509.5L263.4 508.4M267.0 492.7L274.8 495.6L282.6 493.3L289.4 493.3L290.0 499.5L292.3 507.3L296.2 505.0L306.0 507.3L315.8 508.3L322.6 511.2L333.4 507.3L340.0 504.4M267.0 492.7L269.9 501.5L274.8 507.3L277.7 514.2L279.6 521.0L278.7 528.8L282.6 534.7L285.5 536.6L276.7 537.0L268.9 535.7L267.0 539.6L265.0 535.7L259.1 537.6L255.2 534.7L249.4 537.6L243.5 541.5L237.7 534.7L233.8 530.8L229.8 526.9L225.9 527.9L222.0 527.9L215.2 528.8L214.2 533.7L208.4 532.3L204.5 535.7L200.5 532.7L190.8 535.7L182.0 537.6L176.1 540.5L176.1 547.4L182.0 548.4L186.9 544.5L182.0 549.3L193.7 549.3L183.9 551.3L190.8 555.2L189.8 557.1L182.0 558.1L178.1 560.1M340.0 492.7L335.3 494.6L333.4 499.5L335.3 503.4L340.0 504.4M245.5 501.1L246.6 501.3M261.1 510.3L263.4 508.3M381.8 390.0L380.8 396.8L375.9 398.8L371.1 404.6L367.1 402.7L372.0 402.7L369.1 407.6L365.2 410.5L360.3 408.6L353.5 410.5L359.3 412.5L356.4 416.4L359.3 419.3L352.5 420.3L345.7 421.2L341.8 423.2L348.6 422.2L355.4 424.2L360.3 427.1L368.1 426.1L374.0 425.2L376.9 427.1L374.0 428.1L373.6 433.9L374.4 437.9L372.0 441.2L368.1 442.7L363.2 444.7L356.4 444.7L346.6 447.6L337.9 449.6L335.9 452.5L332.0 450.5L327.1 448.6L319.3 448.2L310.5 449.6L304.6 452.5L299.8 449.6L294.9 447.6L290.0 448.6M446.2 423.6L442.3 425.2L434.5 427.1L426.7 430.0L419.9 433.9L415.0 436.9L407.2 437.9L399.4 440.4L392.5 441.8L384.7 444.7L380.2 447.0L378.9 455.4L380.2 461.3L379.5 467.1L381.8 474.0L378.9 473.0L375.9 476.9L368.1 482.8L356.4 485.7L346.6 488.6L337.9 492.5L333.9 498.4L333.0 502.3L338.8 503.7L345.7 502.3L338.8 504.3L332.0 507.2L322.2 511.1L309.5 508.2L298.8 507.2L293.9 506.2L290.0 503.3M439.4 419.3L446.2 417.3L452.1 417.3L458.0 419.3L456.0 421.2L461.9 423.2L466.8 422.2L467.7 426.1L468.7 430.0L465.8 428.1L459.9 426.1L454.1 427.1L446.2 425.2L439.4 419.3M447.2 413.4L454.1 412.5L460.9 415.4L466.8 418.3L464.8 415.4L459.9 414.4M447.2 413.4L452.1 409.5L459.9 407.6L458.0 402.7L463.8 399.8L469.7 394.9L473.6 390.0M290.0 285.9L292.0 292.7L293.9 290.8L301.7 293.7L309.5 296.6L314.4 299.6L317.3 306.4L325.2 311.3L326.1 313.2L322.8 315.2L322.2 318.1L325.2 324.0L332.0 331.8L333.9 335.7L328.1 333.8L323.2 329.8L319.3 328.9L314.4 330.8L306.6 329.8M306.6 330.4L313.4 329.5L320.3 328.9L326.1 332.8L334.9 339.6L338.8 346.4L340.8 352.3L339.8 356.2L333.9 360.1L330.0 364.0L335.9 367.0L340.8 367.9L341.8 368.9L342.7 365.0L346.6 361.1L354.5 361.1L363.2 360.7L372.0 362.1L377.9 365.0L382.8 368.9L385.7 376.7L386.1 380.6L383.8 386.5L381.8 390.0M490.0 345.5L485.3 346.4L489.2 347.4M485.3 350.4L483.4 353.3L482.4 358.2L485.3 357.2L485.3 351.3M490.0 363.0L485.3 362.1L481.4 361.1L480.4 368.9L478.5 376.7L476.5 384.5L473.6 390.0M240.0 157.9L245.3 158.7L253.1 158.7L262.5 158.2L267.2 160.2L271.1 163.3L273.4 168.0L268.8 171.9L264.8 175.8L263.3 179.8M263.8 180.0L261.4 187.0L258.3 194.8L252.8 198.0L251.2 199.5M260.6 236.6L263.0 240.2L267.7 244.8L271.6 248.8L276.2 250.3L277.8 258.1L280.2 267.5L283.3 273.8L285.6 276.9L287.2 284.7L291.1 287.0L291.6 291.7L293.4 290.9L299.7 293.3L305.9 294.8L311.4 297.2L313.8 300.0M498.4 99.3L499.5 99.8M503.4 100.1L505.0 102.4L502.7 104.8L503.4 103.2M507.3 99.8L510.5 100.1L512.8 101.6L513.6 105.5L516.7 102.4L519.8 101.6L523.0 104.8L526.9 107.1L530.0 107.1L525.3 105.5L523.8 102.4L526.9 100.1L532.3 99.8M508.9 101.6L506.6 106.3L505.0 110.2L507.3 114.9L510.5 119.6L515.2 122.2L520.6 123.5L523.0 126.9L527.7 129.8L533.1 132.1L537.8 132.9L542.5 131.3L543.3 130.5L544.8 132.9L549.5 132.1L545.6 134.4L536.2 135.2L538.6 137.6L540.9 135.2L542.5 139.9L547.2 138.3L548.8 143.0L551.1 139.1L553.4 143.8L555.0 145.4L557.3 140.7L559.7 140.7L558.9 144.6L562.8 143.0L565.2 145.4L567.5 146.2L571.4 144.6L573.8 143.0L577.7 143.8L576.1 141.5L583.1 141.0L587.0 138.3L587.8 134.4L589.4 139.9L590.9 142.2L591.7 139.1L594.8 136.8L597.2 138.3L598.8 134.4L603.4 132.1L605.8 129.0L608.9 127.4L612.0 124.3L614.4 126.6L616.7 123.5L612.8 122.7L617.5 119.6L617.5 117.2L620.6 118.8L625.3 115.7M620.1 182.1L612.3 184.1L605.4 184.6L599.6 188.6L594.7 195.4L594.3 202.2L591.2 206.1L590.4 216.9L591.2 226.6L590.8 232.5L592.3 238.4L591.8 246.2L589.2 252.0L596.6 255.0L594.7 250.1L597.6 252.0L600.5 255.9L606.4 255.9L607.4 265.7L608.4 271.6L607.4 279.4L608.4 285.2L613.2 289.1L616.2 293.0L620.1 295.0M620.1 187.6L614.2 188.6L608.4 192.5L605.4 197.3L602.5 201.2L604.5 205.2L600.5 204.2L595.7 199.3L596.6 205.2L592.7 206.1M620.1 197.3L615.2 199.3L611.3 204.2L607.4 206.1L609.3 211.0L606.4 211.0L603.5 207.1L598.6 207.1M591.2 214.9L594.7 216.9L596.6 218.8L592.7 218.4M591.8 227.6L595.7 228.6L599.6 236.4L593.7 239.3L591.8 238.4M601.5 267.7L604.5 265.7L607.4 267.7L607.4 270.6L604.5 272.5L602.1 270.6L601.5 267.7M601.5 276.4L604.5 279.4L602.5 285.2L601.5 276.4M620.1 297.9L614.2 299.9L607.4 300.9L606.4 304.8L609.3 306.7L616.2 304.8L614.2 309.6L613.2 314.5L620.1 313.6M613.2 315.5L617.1 318.4L615.2 320.0M480.0 364.5L482.0 360.5L485.9 363.5L490.8 361.5L498.6 357.6L503.5 351.8L506.4 348.8L515.2 344.9L522.0 342.0L533.8 342.0L545.5 339.1L549.4 341.0L553.3 345.9L557.2 346.9L559.1 348.8L562.1 347.9L567.0 346.5L561.1 345.9L557.2 344.9L555.2 342.0L558.2 335.2L562.1 331.2L568.9 330.9L576.7 330.3L586.5 329.3L590.4 334.2L592.3 338.1L588.4 339.1L591.4 342.0L596.2 342.0L594.3 335.2L598.2 334.2L602.1 337.1L605.0 336.1L603.1 343.9L602.1 338.1L603.1 331.2L606.0 323.4L608.9 321.5L611.9 323.4L619.7 324.4M484.9 346.5L488.8 344.5L492.7 343.9L488.8 345.7L484.9 346.5M497.6 342.0L502.5 340.4L508.4 339.6L503.5 341.4L497.6 342.0M512.3 338.7L521.1 336.7L516.2 338.5L512.3 338.7M528.3 336.1L531.8 335.2L529.8 336.5L528.3 336.1M546.4 331.2L548.4 330.3M553.3 329.3L556.8 328.5L555.2 329.7L553.3 329.3M559.5 329.3L561.1 328.3L562.7 330.3L560.7 330.9L559.5 329.3M483.0 350.8L485.3 350.4L485.3 356.6L483.0 358.2L483.0 350.8M612.9 315.6L616.8 319.5L619.7 320.5M613.8 304.9L617.7 308.8L614.8 312.7L619.7 311.7M107.0 268.0L106.2 265.2L102.3 263.6L98.4 262.8L96.1 260.5L92.2 260.5L95.3 263.6L90.6 262.5L85.9 263.6L85.6 268.3L89.1 272.2L83.6 276.1L85.2 271.4L83.6 265.9L81.2 269.8L78.1 265.9L75.0 268.3L72.7 265.6L68.8 268.3L63.3 268.3L60.9 273.8L57.8 276.1L60.2 280.0L62.5 280.8L57.8 282.3L58.6 285.5L53.9 283.9L50.0 285.5L46.6 288.1L48.4 290.0M96.9 273.0L100.0 268.3L104.7 266.7L107.0 268.0L103.1 272.2L96.9 273.8L96.9 273.0" fill="none" stroke="#008800" stroke-width="1" stroke-linejoin="round" shape-rendering="crispEdges"/><path d="M94.0 447.0l7.0 7.0M101.0 447.0l-7.0 7.0M54.9 462.0l7.0 7.0M61.9 462.0l-7.0 7.0M126.0 481.0l7.0 7.0M133.0 481.0l-7.0 7.0M83.8 497.0l7.0 7.0M90.8 497.0l-7.0 7.0M129.0 509.9l7.0 7.0M136.0 509.9l-7.0 7.0M88.8 527.1l7.0 7.0M95.8 527.1l-7.0 7.0M385.1 420.1l7.0 7.0M392.1 420.1l-7.0 7.0M441.8 387.5l7.0 7.0M448.8 387.5l-7.0 7.0M396.9 357.0l7.0 7.0M403.9 357.0l-7.0 7.0M460.9 326.0l7.0 7.0M467.9 326.0l-7.0 7.0" stroke="#a800a8" stroke-width="1" fill="none"/><g shape-rendering="crispEdges"><path d="M195.3 502.2L403.3 424.6L484.5 295.5L535.2 278.3L581.7 180.7L561.6 170.1L486.4 268.2L455.5 278.3L387.3 412.1" fill="none" stroke="#f85858" stroke-width="1"/><path d="M173.0 507.7L195.3 502.2L376.0 442.8" fill="none" stroke="#f85858" stroke-width="1"/></g><circle cx="195.3" cy="502.2" r="3.2" fill="none" stroke="#f85858" stroke-width="1"/><circle cx="403.3" cy="424.6" r="3.2" fill="none" stroke="#f85858" stroke-width="1"/><circle cx="484.5" cy="295.5" r="3.2" fill="none" stroke="#f85858" stroke-width="1"/><circle cx="535.2" cy="278.3" r="3.2" fill="none" stroke="#f85858" stroke-width="1"/><circle cx="581.7" cy="180.7" r="3.2" fill="none" stroke="#f85858" stroke-width="1"/><circle cx="561.6" cy="170.1" r="3.2" fill="none" stroke="#f85858" stroke-width="1"/><circle cx="486.4" cy="268.2" r="3.2" fill="none" stroke="#f85858" stroke-width="1"/><circle cx="455.5" cy="278.3" r="3.2" fill="none" stroke="#f85858" stroke-width="1"/><circle cx="387.3" cy="412.1" r="3.2" fill="none" stroke="#f85858" stroke-width="1"/><path d="M573.9 176.6L568.8 176.3L570.8 172.6zM559.6 227.2L559.4 232.3L555.7 230.5zM522.4 221.2L523.6 216.2L526.9 218.8zM468.5 274.1L472.3 270.6L473.6 274.6zM507.4 287.7L511.2 284.3L512.5 288.2zM420.2 347.5L420.5 342.4L424.2 344.3zM442.5 362.3L443.2 357.2L446.8 359.4zM296.9 464.3L300.5 460.7L302.0 464.6z" fill="#f85858"/><path d="M283.2 473.3L287.0 469.9L288.3 473.8z" fill="#f85858"/><rect x="364.5" y="434.5" width="20" height="20" fill="none" stroke="#f85858" stroke-width="1" shape-rendering="crispEdges"/><path d="M367.1 441.0h12.6l-1.4 1.1h-8.8zM370.7 441.0l0.6-1h6.8v1zM373.5 440.0v-1h2.4v1zM374.3 439.0v-1h1v1zM371.1 446.3h12.6l-1.4 1.1h-8.8zM374.7 446.3l0.6-1h6.8v1zM377.5 445.3v-1h2.4v1zM378.3 444.3v-1h1v1zM367.1 451.5h12.6l-1.4 1.1h-8.8zM370.7 451.5l0.6-1h6.8v1zM373.5 450.5v-1h2.4v1zM374.3 449.5v-1h1v1z" fill="#2828b0"/><text transform="translate(390,439.8) scale(1,0.9)" font-family="Liberation Mono" font-weight="bold" font-size="14.4" fill="#2828b0">Task</text><text transform="translate(390,449.9) scale(1,0.9)" font-family="Liberation Mono" font-weight="bold" font-size="14.4" fill="#2828b0">143</text><text transform="translate(390,460.0) scale(1,0.9)" font-family="Liberation Mono" font-weight="bold" font-size="14.4" fill="#2828b0">0</text><path d="M138.3 379.7h12.6l-1.4 1.1h-8.8zM141.9 379.7l0.6-1h6.8v1zM144.7 378.7v-1h2.4v1zM145.5 377.7v-1h1v1zM142.2 385.2h12.6l-1.4 1.1h-8.8zM145.8 385.2l0.6-1h6.8v1zM148.6 384.2v-1h2.4v1zM149.4 383.2v-1h1v1zM138.3 389.9h12.6l-1.4 1.1h-8.8zM141.9 389.9l0.6-1h6.8v1zM144.7 388.9v-1h2.4v1zM145.5 387.9v-1h1v1zM165.0 507.5l2 1.2h13l1.2 0.8v0.7h-14.5l-1.7-1.2zM171.5 508.7v-2.5h3.8v2.5z" fill="#2828b0"/><ellipse cx="172.4" cy="507.9" rx="16.5" ry="13.7" fill="none" stroke="#d8c830" stroke-width="1"/></svg>
<div style="left:0px;top:570px;width:388px;height:126px;background:#c0c0c0;"></div>
<div style="left:1px;top:571px;width:386px;height:124px;background:#1414a0;"></div>
<div style="left:4px;top:574px;width:380px;height:118px;background:#c0c0c0;"></div>
<div style="left:25px;top:571px;width:1px;height:3px;background:#c0c0c0;"></div>
<div style="left:25px;top:692px;width:1px;height:3px;background:#c0c0c0;"></div>
<div style="left:362px;top:571px;width:1px;height:3px;background:#c0c0c0;"></div>
<div style="left:362px;top:692px;width:1px;height:3px;background:#c0c0c0;"></div>
<div style="left:1px;top:595px;width:3px;height:1px;background:#c0c0c0;"></div>
<div style="left:384px;top:595px;width:3px;height:1px;background:#c0c0c0;"></div>
<div style="left:1px;top:670px;width:3px;height:1px;background:#c0c0c0;"></div>
<div style="left:384px;top:670px;width:3px;height:1px;background:#c0c0c0;"></div>
<div style="left:5px;top:575px;width:378px;height:16px;background:#fff;"></div>
<div style="left:5px;top:591px;width:379px;height:2px;background:#a8a8a8;"></div>
<div style="left:5px;top:593px;width:362px;height:97px;background:#fff;"></div>
<div style="left:367px;top:593px;width:17px;height:98px;background:#a8a8a8;"></div>
<div style="left:5px;top:690px;width:379px;height:1px;background:#a8a8a8;"></div>
<div class="btn" style="left:5px;top:575px;width:16px;height:16px"><i style="left:4px;top:5px;width:7px;height:3px;background:#000"></i></div>
<span class="t" style="left:118px;top:576px;color:#000;">Incoming&nbsp;Messages</span>
<div class="btn" style="left:350px;top:575px;width:16px;height:16px"><svg width="16" height="16"><path d="M4.5 6.5h7l-3.5 3.5z" fill="#000"/></svg></div>
<div class="btn" style="left:367px;top:575px;width:16px;height:16px"><svg width="16" height="16"><path d="M4.5 9.5h7l-3.5 -3.5z" fill="#000"/></svg></div>
<div class="btn" style="left:368px;top:593px;width:14px;height:14px"><svg width="14" height="14"><path d="M7 2.5l4 4h-2.5v4h-3v-4h-2.5z" fill="#000"/></svg></div>
<div class="btn" style="left:368px;top:608px;width:14px;height:14px"></div>
<div class="btn" style="left:368px;top:676px;width:14px;height:14px"><svg width="14" height="14"><path d="M7 11l4 -4h-2.5v-4h-3v4h-2.5z" fill="#000"/></svg></div>
<span class="t" style="left:10px;top:595px;color:#000;">Task&nbsp;Force&nbsp;West&nbsp;has&nbsp;no&nbsp;orders.</span>
<span class="t" style="left:10px;top:612px;color:#000;">Task&nbsp;Force&nbsp;North&nbsp;has&nbsp;no&nbsp;orders.</span>
<span class="t" style="left:10px;top:629px;color:#000;">Trenchant&nbsp;S073&nbsp;&nbsp;has&nbsp;no&nbsp;orders.</span>
<svg style="left:330px;top:49px" width="14" height="20" viewBox="0 0 14 20"><path d="M1.5 1.5v10.5l2.4-2.3 2.9 6.2 2.3-1-2.8-6h4.2z" fill="#fff" stroke="#000" stroke-width="1"/></svg>
</body></html>
